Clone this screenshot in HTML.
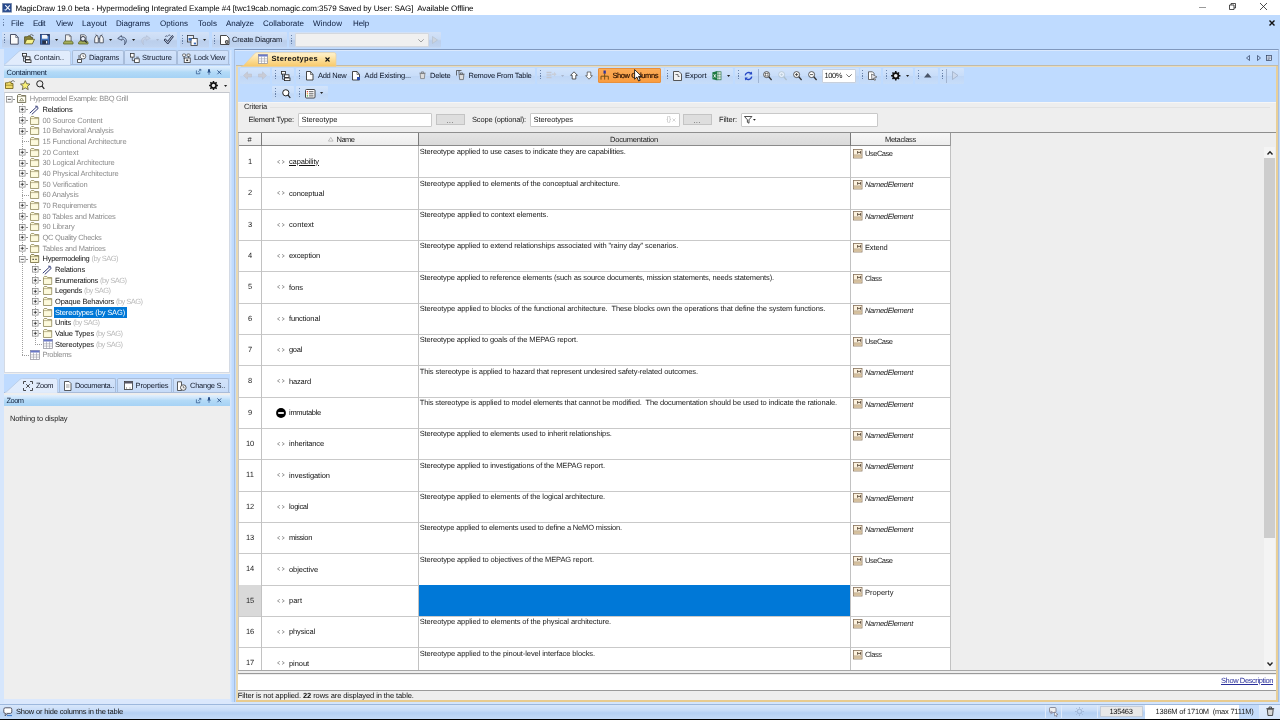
<!DOCTYPE html><html><head><meta charset="utf-8"><title>MagicDraw 19.0 beta - Hypermodeling Integrated Example #4</title><style>
*{box-sizing:border-box;margin:0;padding:0}
html,body{width:1280px;height:720px;overflow:hidden;background:#bfdbff}
body{position:relative;text-rendering:geometricPrecision;font-family:"Liberation Sans",sans-serif;font-size:7.5px;color:#111;line-height:1}
.a{position:absolute;white-space:nowrap}
.t{position:absolute;white-space:nowrap;line-height:10px;height:10px}
.g{color:#8c8c8c}
.lg{color:#b9b9b9}
svg{position:absolute;overflow:visible}
#w{position:absolute;left:0;top:0;width:1280px;height:720px;overflow:hidden;will-change:transform}
.grip{position:absolute;width:1.3px;height:10.7px;background:repeating-linear-gradient(#6a83aa 0,#6a83aa 1.3px,transparent 1.3px,transparent 2.667px)}
.tb{position:absolute;background:linear-gradient(#d3e4fb,#c8ddf9 48%,#c0d7f6 52%,#c7ddf9);border-radius:1px}
.tb0{position:absolute;background:linear-gradient(#d3e2f8,#c9dbf4 45%,#bbcfec 55%,#bfd3f0 90%,#c8dbf6);border-radius:1px}
.fld{position:absolute;background:#fff;border:1px solid #c9c9c9;border-radius:1px}
.btn{position:absolute;background:#dedede;border:1px solid #c4c4c4;text-align:center}
</style></head><body><div id="w">
<div class="a" style="left:0px;top:0px;width:1280px;height:15px;background:#fff"></div>
<svg style="left:2px;top:3px" width="10" height="9.5" viewBox="0 0 10 9.5"><rect x=".3" y=".3" width="9.4" height="8.9" fill="#27498c" stroke="#8695b0" stroke-width=".6"/><path d="M3.2 2.2L8 7.2M7.8 2.4L3.4 7.4" stroke="#f4f7fc" stroke-width="1.1"/><path d="M1.8 6.8H4.2" stroke="#9cc0ee" stroke-width=".8"/></svg>
<div id="t1" class="t " style="left:15.5px;top:3.8000000000000007px;letter-spacing:-0.074px;font-size:8px;color:#000">MagicDraw 19.0 beta - Hypermodeling Integrated Example #4 [twc19cab.nomagic.com:3579 Saved by User: SAG]&nbsp; Available Offline</div>
<svg style="left:1199px;top:6.5px" width="7" height="1" viewBox="0 0 7 1"><rect width="7" height="1" fill="#9a9a9a"/></svg>
<svg style="left:1229px;top:3px" width="7" height="7" viewBox="0 0 7 7"><path d="M0.5 2H5V6.5H0.5Z M2 2V0.5H6.5V5H5" fill="none" stroke="#222" stroke-width=".8"/></svg>
<svg style="left:1260px;top:3px" width="7" height="7" viewBox="0 0 7 7"><path d="M0 0L7 7M7 0L0 7" stroke="#222" stroke-width=".8"/></svg>
<div class="grip" style="left:3px;top:18.7px;height:8px"></div>
<div id="t2" class="t " style="left:11px;top:18.6px;letter-spacing:0.027px;font-size:8px;color:#0a1a3a">File</div>
<div id="t3" class="t " style="left:33px;top:18.6px;letter-spacing:-0.449px;font-size:8px;color:#0a1a3a">Edit</div>
<div id="t4" class="t " style="left:56px;top:18.6px;letter-spacing:-0.051px;font-size:8px;color:#0a1a3a">View</div>
<div id="t5" class="t " style="left:82px;top:18.6px;letter-spacing:0.161px;font-size:8px;color:#0a1a3a">Layout</div>
<div id="t6" class="t " style="left:116px;top:18.6px;letter-spacing:-0.029px;font-size:8px;color:#0a1a3a">Diagrams</div>
<div id="t7" class="t " style="left:160px;top:18.6px;letter-spacing:0.060px;font-size:8px;color:#0a1a3a">Options</div>
<div id="t8" class="t " style="left:198px;top:18.6px;letter-spacing:0.062px;font-size:8px;color:#0a1a3a">Tools</div>
<div id="t9" class="t " style="left:226px;top:18.6px;letter-spacing:-0.067px;font-size:8px;color:#0a1a3a">Analyze</div>
<div id="t10" class="t " style="left:263px;top:18.6px;letter-spacing:0.007px;font-size:8px;color:#0a1a3a">Collaborate</div>
<div id="t11" class="t " style="left:313px;top:18.6px;letter-spacing:0.091px;font-size:8px;color:#0a1a3a">Window</div>
<div id="t12" class="t " style="left:353px;top:18.6px;letter-spacing:-0.113px;font-size:8px;color:#0a1a3a">Help</div>
<svg style="left:1268.8px;top:19.7px" width="6" height="6" viewBox="0 0 6 6"><path d="M0.5 0.5L5.5 5.5M5.5 0.5L0.5 5.5" stroke="#111" stroke-width="1.4"/></svg>
<div class="tb0" style="left:2px;top:32px;width:175px;height:16px"></div>
<div class="tb0" style="left:180px;top:32px;width:29px;height:16px"></div>
<div class="tb0" style="left:212px;top:32px;width:75px;height:16px"></div>
<div class="tb0" style="left:289px;top:32px;width:152px;height:16px"></div>
<div class="grip" style="left:3.5px;top:34.3px;width:1.5px"></div>
<svg style="left:10px;top:34px" width="8.7" height="10.7" viewBox="0 0 8.7 10.7"><path d="M0.5 0.5H5.699999999999999L8.2 3.5V10.2H0.5Z" fill="#fafafa" stroke="#3a4258" stroke-width=".9"/><path d="M5.699999999999999 0.5V3.5H8.2" fill="none" stroke="#3a4258" stroke-width=".6"/></svg>
<svg style="left:24px;top:34.3px" width="11" height="10.5" viewBox="0 0 11 10.5"><path d="M.6 9.9V2.8H3.2L4.1 1.9H6.8V3.5H8.6V5.4" fill="#8a8438" stroke="#4f4d1e" stroke-width=".8"/><path d="M.6 9.9L2.7 5.3H10.5L8.4 9.9Z" fill="#f7f28c" stroke="#55521f" stroke-width=".8"/><path d="M5.6 1.6C6.6 0 8.2 0 9 1.3" fill="none" stroke="#444" stroke-width=".6"/><path d="M8.1 1.1L9.3 1L9.2 2.2Z" fill="#222"/></svg>
<svg style="left:40px;top:34px" width="10" height="10.7" viewBox="0 0 10 10.7"><rect x=".5" y=".5" width="9" height="9.7" fill="#4172bb" stroke="#2a3f73" stroke-width=".9"/><rect x="2" y=".9" width="5.6" height="3.8" fill="#f1f4fa"/><path d="M6.2 .6L8.6 .6L8.6 2.4Z" fill="#1d2740"/><rect x="2.2" y="6.4" width="5.6" height="3.7" fill="#27324a"/><rect x="6" y="7" width="1.2" height="2.5" fill="#e6ebf4"/></svg>
<svg style="left:55px;top:38.6px" width="3.2" height="2" viewBox="0 0 3.2 2"><path d="M0 0H3.2L1.6 2Z" fill="#222"/></svg>
<svg style="left:63px;top:34px" width="10.5" height="10.7" viewBox="0 0 10.5 10.7"><path d="M2.5 7V.8H6.6L8.1 2.3V7" fill="#f0f0ee" stroke="#4a4f5c" stroke-width=".8"/><path d="M6.4 .9V2.5H8" fill="none" stroke="#4a4f5c" stroke-width=".5"/><path d="M.6 10C.2 8.2 1.4 7 2.5 7H8.1C9.4 7 10.4 8.2 10 10Z" fill="#a5ae5c" stroke="#5c6426" stroke-width=".8"/></svg>
<svg style="left:78px;top:34px" width="10.5" height="10.7" viewBox="0 0 10.5 10.7"><path d="M2.5 7V.8H6.6L8.1 2.3V7" fill="#f0f0ee" stroke="#4a4f5c" stroke-width=".8"/><path d="M.6 10C.2 8.2 1.4 7 2.5 7H8.1C9.4 7 10.4 8.2 10 10Z" fill="#a5ae5c" stroke="#5c6426" stroke-width=".8"/><circle cx="5" cy="4.8" r="2.3" fill="#eef3ff" stroke="#1f2433" stroke-width=".9"/><path d="M6.7 6.6L8.8 8.6" stroke="#1f2433" stroke-width="1.2"/></svg>
<svg style="left:94px;top:34.3px" width="10" height="9.5" viewBox="0 0 10 9.5"><path d="M.7 8.8V4.4L2 1.6H3.6L4.3 4.4V8.8Z M5.7 8.8V4.4L6.4 1.6H8L9.3 4.4V8.8Z" fill="#f6f6f6" stroke="#3a3f4c" stroke-width=".8"/><path d="M4.3 4.6H5.7" stroke="#3a3f4c" stroke-width="1"/><path d="M1.6 .4L2.8 1.5M8.4 .4L7.2 1.5" stroke="#3a3f4c" stroke-width=".7"/></svg>
<svg style="left:109px;top:38.6px" width="3.2" height="2" viewBox="0 0 3.2 2"><path d="M0 0H3.2L1.6 2Z" fill="#222"/></svg>
<svg style="left:117px;top:34.6px" width="11" height="10.5" viewBox="0 0 11 10.5"><path d="M4.4.6L.7 3.5L4.9 5.3V4C7.3 4 8.6 5.8 7.4 9.8C10.8 6.2 9.6 2 4.6 2Z" fill="#bcd2f0" stroke="#36425e" stroke-width=".8" stroke-linejoin="round"/></svg>
<svg style="left:132.2px;top:38.6px" width="3.2" height="2" viewBox="0 0 3.2 2"><path d="M0 0H3.2L1.6 2Z" fill="#222"/></svg>
<svg style="left:140px;top:34.6px" width="11" height="10.5" viewBox="0 0 11 10.5"><path d="M6.6.6L10.3 3.5L6.1 5.3V4C3.7 4 2.4 5.8 3.6 9.8C.2 6.2 1.4 2 6.4 2Z" fill="#c6d2e6" stroke="#b2bfd6" stroke-width=".7" stroke-linejoin="round"/></svg>
<svg style="left:155.5px;top:38.6px" width="3.2" height="2" viewBox="0 0 3.2 2"><path d="M0 0H3.2L1.6 2Z" fill="#a9b6cc"/></svg>
<svg style="left:163px;top:34.3px" width="11" height="11" viewBox="0 0 11 11"><path d="M1 6L2.3 4.8L4.6 7.4L9.2 1.5L10.4 2.6L4.8 10Z" fill="#aebcd6" stroke="#1f2840" stroke-width=".9"/><path d="M2.2 2.8C3 1.5 4 1.5 4.5 2.8M5 1.8C5.8.6 6.8.6 7.3 1.8" fill="none" stroke="#2b3550" stroke-width=".7"/></svg>
<div class="grip" style="left:182px;top:34.5px"></div>
<svg style="left:187px;top:34.5px" width="11" height="11" viewBox="0 0 11 11"><rect x=".5" y=".5" width="6" height="6.5" fill="#e8eef8" stroke="#333" stroke-width=".8"/><rect x="4" y="3.5" width="6.2" height="7" fill="#fff" stroke="#333" stroke-width=".8"/><rect x="1.6" y="3" width="3" height="2.6" fill="#3d6db8"/><rect x="6.8" y="7.6" width="2.2" height="1.8" fill="#3d6db8"/></svg>
<svg style="left:203px;top:38.6px" width="3.2" height="2" viewBox="0 0 3.2 2"><path d="M0 0H3.2L1.6 2Z" fill="#222"/></svg>
<div class="grip" style="left:214px;top:34.5px"></div>
<svg style="left:220px;top:35px" width="10" height="10" viewBox="0 0 10 10"><path d="M.5.5H6.5L9 3V9.5H.5Z" fill="#fff" stroke="#333" stroke-width=".9"/><circle cx="6.8" cy="7" r="1.9" fill="#444"/><circle cx="6.8" cy="7" r=".7" fill="#fff"/></svg>
<div id="t13" class="t " style="left:232px;top:35px;letter-spacing:-0.210px;color:#101624">Create Diagram</div>
<div class="grip" style="left:291px;top:34.5px"></div>
<div class="fld" style="left:295px;top:33px;width:133.5px;height:13.5px;background:#f0f0f0;border-color:#d4d8de"></div>
<svg style="left:417.5px;top:38.5px" width="6" height="3.5" viewBox="0 0 6 3.5"><path d="M.3.3L3 3L5.7.3" fill="none" stroke="#8a8a8a" stroke-width=".8"/></svg>
<svg style="left:432px;top:35.5px" width="6" height="8" viewBox="0 0 6 8"><path d="M.5.5L5.5 4L.5 7.5Z" fill="#ccd4df" stroke="#b4bdca" stroke-width=".6"/></svg>
<div class="a" style="left:0px;top:63.8px;width:231px;height:0.9px;background:#a9bcd9"></div>
<svg style="left:0px;top:49.8px" width="71" height="15.4"><path d="M3.5 14.6L5.5 13.8L19 1.4Q20 .5 21.5 .5H68.5Q70.5 .5 70.5 2.5V15.4H3.5Z" fill="#e1ecfc" stroke="#b3c5e0" stroke-width=".7"/><path d="M0 14.5H4" stroke="#a9bcd9" stroke-width=".9"/></svg>
<div id="t14" class="t " style="left:34px;top:52.8px;letter-spacing:-0.003px;color:#151c2c">Contain..</div>
<svg style="left:22px;top:53.0px" width="10" height="10" viewBox="0 0 10 10"><rect x=".5" y=".5" width="4" height="2.6" fill="#fff" stroke="#222" stroke-width=".8"/><rect x="3.5" y="3.8" width="4.5" height="2.6" fill="#fff" stroke="#222" stroke-width=".8"/><rect x="3.5" y="7" width="5.5" height="2.6" fill="#fff" stroke="#222" stroke-width=".8"/><path d="M1.5 3V8.3H3.5M1.5 5.1H3.5" fill="none" stroke="#222" stroke-width=".7"/></svg>
<div class="a" style="left:72px;top:50.3px;width:51.599999999999994px;height:13.6px;background:linear-gradient(#d3e3fa,#c6dbf8);border:.8px solid #a9bdda;border-bottom:none;border-radius:2px 2px 0 0"></div>
<div id="t15" class="t " style="left:89px;top:52.8px;letter-spacing:-0.262px;color:#151c2c">Diagrams</div>
<svg style="left:77px;top:53.0px" width="10" height="10" viewBox="0 0 10 10"><circle cx="6" cy="3.2" r="2.8" fill="#fff" stroke="#333" stroke-width=".7"/><path d="M6 1.5V3.5H7.3" fill="none" stroke="#333" stroke-width=".6"/><rect x=".6" y="6.5" width="3.8" height="3" fill="#fff" stroke="#333" stroke-width=".8"/><path d="M2 6.5V2" stroke="#333" stroke-width=".7"/></svg>
<div class="a" style="left:124.2px;top:50.3px;width:52.39999999999999px;height:13.6px;background:linear-gradient(#d3e3fa,#c6dbf8);border:.8px solid #a9bdda;border-bottom:none;border-radius:2px 2px 0 0"></div>
<div id="t16" class="t " style="left:142px;top:52.8px;letter-spacing:-0.049px;color:#151c2c">Structure</div>
<svg style="left:130px;top:53.0px" width="10" height="10" viewBox="0 0 10 10"><rect x=".5" y=".5" width="3.6" height="3.6" fill="#fff" stroke="#333" stroke-width=".8"/><rect x="4.6" y="5.8" width="4.6" height="3.6" fill="#fff" stroke="#333" stroke-width=".8"/><path d="M2.3 4.1V7.6H4.6M6.2 4.2H8.8" fill="none" stroke="#333" stroke-width=".7"/></svg>
<div class="a" style="left:177.2px;top:50.3px;width:51.80000000000001px;height:13.6px;background:linear-gradient(#d3e3fa,#c6dbf8);border:.8px solid #a9bdda;border-bottom:none;border-radius:2px 2px 0 0"></div>
<div id="t17" class="t " style="left:194px;top:52.8px;letter-spacing:-0.339px;color:#151c2c">Lock View</div>
<svg style="left:182px;top:53.0px" width="10" height="10" viewBox="0 0 10 10"><rect x=".6" y="1" width="3" height="2.4" rx=".8" fill="#fff" stroke="#333" stroke-width=".7"/><rect x="5" y="1" width="3" height="2.4" rx=".8" fill="#fff" stroke="#333" stroke-width=".7"/><rect x="2.2" y="5" width="6" height="4.5" fill="#fff" stroke="#333" stroke-width=".8"/><path d="M2 3.4V6M6.5 3.4V5" stroke="#333" stroke-width=".6"/><rect x="4.2" y="6.5" width="2" height="1.6" fill="#333"/></svg>
<div class="a" style="left:3.5px;top:65.5px;width:226.5px;height:308px;background:#eeeeee"></div>
<div class="a" style="left:3.5px;top:66px;width:226.5px;height:11.5px;background:linear-gradient(#e2f0fd,#cfe6fb 25%,#b3daf7 50%,#a5d2f5)"></div>
<div id="t18" class="t " style="left:6.5px;top:67.5px;letter-spacing:-0.230px;color:#10203c">Containment</div>
<svg style="left:196.3px;top:69.3px" width="5.2" height="5.2" viewBox="0 0 5.2 5.2"><path d="M.4 1.4V4.8H3.8V3.4M2.2 3L4.8.4M3 .4H4.8V2.2" fill="none" stroke="#2a4f86" stroke-width=".7"/></svg>
<svg style="left:206.8px;top:68.6px" width="4" height="6" viewBox="0 0 4 6"><path d="M1 .3H3V3H1Z" fill="#2a4f86"/><path d="M.2 3.2H3.8M2 3.2V5.8" stroke="#2a4f86" stroke-width=".7"/></svg>
<svg style="left:217.3px;top:69.5px" width="4.6" height="4.6" viewBox="0 0 4.6 4.6"><path d="M.4.4L4.2 4.2M4.2 .4L.4 4.2" stroke="#2a4f86" stroke-width=".9"/></svg>
<svg style="left:5px;top:80px" width="10" height="9" viewBox="0 0 10 9"><path d="M.5 8.5V2.8H3L3.8 2H6V3.5H8V8.5Z" fill="#f1dc6a" stroke="#6b5a10" stroke-width=".8"/><path d="M.5 5.2H8" stroke="#6b5a10" stroke-width=".6"/><path d="M6 2C7 .4 8.5.4 9.6 1.6" fill="none" stroke="#333" stroke-width=".7"/></svg>
<svg style="left:20px;top:79.5px" width="10.5" height="10" viewBox="0 0 10.5 10"><path d="M5.25.6L6.7 3.7L10 4.1L7.5 6.3L8.2 9.6L5.25 7.9L2.3 9.6L3 6.3L.5 4.1L3.8 3.7Z" fill="#f9f078" stroke="#55523a" stroke-width=".8" stroke-linejoin="round"/></svg>
<svg style="left:35.5px;top:80px" width="9" height="9.5" viewBox="0 0 9 9.5"><circle cx="3.8" cy="3.8" r="3.1" fill="none" stroke="#222" stroke-width="1"/><path d="M6 6.2L8.3 8.8" stroke="#222" stroke-width="1.2"/></svg>
<svg style="left:208.5px;top:80.5px" width="9" height="9" viewBox="0 0 9 9"><path d="M8.94 3.78 L8.94 5.22 L7.81 5.28 L7.39 6.28 L8.15 7.13 L7.13 8.15 L6.28 7.39 L5.28 7.81 L5.22 8.94 L3.78 8.94 L3.72 7.81 L2.72 7.39 L1.87 8.15 L0.85 7.13 L1.61 6.28 L1.19 5.28 L0.06 5.22 L0.06 3.78 L1.19 3.72 L1.61 2.72 L0.85 1.87 L1.87 0.85 L2.72 1.61 L3.72 1.19 L3.78 0.06 L5.22 0.06 L5.28 1.19 L6.28 1.61 L7.13 0.85 L8.15 1.87 L7.39 2.72 L7.81 3.72Z" fill="#111"/><circle cx="4.5" cy="4.5" r="1.7" fill="#eee"/></svg>
<svg style="left:224.2px;top:84.6px" width="3.2" height="2" viewBox="0 0 3.2 2"><path d="M0 0H3.2L1.6 2Z" fill="#222"/></svg>
<div class="a" style="left:3.5px;top:92.3px;width:226.3px;height:281px;background:#fff;border:1px solid #d4dae4;border-top-color:#c3c6cc"></div>
<div class="a" style="left:22px;top:104.0px;width:1px;height:251.00799999999998px;background:repeating-linear-gradient(#a0a0a0 0,#a0a0a0 1px,transparent 1px,transparent 2px)"></div>
<div class="a" style="left:35px;top:264.005px;width:1px;height:80.33600000000001px;background:repeating-linear-gradient(#a0a0a0 0,#a0a0a0 1px,transparent 1px,transparent 2px)"></div>
<div class="a" style="left:13.3px;top:98.6px;width:2.2px;height:0.8px;background:#8c8c8c"></div>
<svg style="left:5.7px;top:95.7px" width="6.6" height="6.6" viewBox="0 0 6.6 6.6"><rect x=".5" y=".5" width="5.6" height="5.6" fill="#fff" stroke="#7d7d7d" stroke-width=".7"/><path d="M1.7 3.3H4.9" stroke="#222" stroke-width=".8"/></svg>
<svg style="left:17px;top:94.3px" width="9.2" height="9" viewBox="0 0 9.2 9"><path d="M.5 8.5V1.5L1.3.5H3.8L4.6 1.5H8.7V8.5Z" fill="#fffef2" stroke="#5e5a3c" stroke-width=".8"/><path d="M.5 2.4H8.7" stroke="#5e5a3c" stroke-width=".5"/><path d="M2.6 6.8L4.6 4L6.6 6.8Z" fill="none" stroke="#6a6a4a" stroke-width=".7"/></svg>
<div id="t19" class="t g" style="left:29.8px;top:93.6px;letter-spacing:-0.315px;">Hypermodel Example: BBQ Grill</div>
<div class="a" style="left:26.3px;top:109.267px;width:2.2px;height:0.8px;background:#8c8c8c"></div>
<svg style="left:18.7px;top:106.367px" width="6.6" height="6.6" viewBox="0 0 6.6 6.6"><rect x=".5" y=".5" width="5.6" height="5.6" fill="#fff" stroke="#7d7d7d" stroke-width=".7"/><path d="M1.7 3.3H4.9" stroke="#222" stroke-width=".8"/><path d="M3.3 1.7V4.9" stroke="#222" stroke-width=".8"/></svg>
<svg style="left:29px;top:104.667px" width="10" height="10" viewBox="0 0 10 10"><path d="M.8 8.2L8 1.5M2.8 9.4L9.6 3" stroke="#1d2668" stroke-width=".9"/><path d="M6 1.2H8.4V3.4" fill="none" stroke="#1d2668" stroke-width=".7"/></svg>
<div id="t20" class="t " style="left:42.5px;top:104.6px;letter-spacing:-0.142px;">Relations</div>
<div class="a" style="left:26.3px;top:119.934px;width:2.2px;height:0.8px;background:#8c8c8c"></div>
<svg style="left:18.7px;top:117.034px" width="6.6" height="6.6" viewBox="0 0 6.6 6.6"><rect x=".5" y=".5" width="5.6" height="5.6" fill="#fff" stroke="#7d7d7d" stroke-width=".7"/><path d="M1.7 3.3H4.9" stroke="#222" stroke-width=".8"/><path d="M3.3 1.7V4.9" stroke="#222" stroke-width=".8"/></svg>
<svg style="left:30px;top:115.634px" width="9.2" height="9" viewBox="0 0 9.2 9"><path d="M.5 8.5V1.5L1.3.5H3.8L4.6 1.5H8.7V8.5Z" fill="#fdfadc" stroke="#8f8858" stroke-width=".8"/><path d="M.5 2.6H8.7" stroke="#7d7440" stroke-width=".5"/></svg>
<div id="t21" class="t g" style="left:42.5px;top:115.6px;letter-spacing:-0.150px;">00 Source Content</div>
<div class="a" style="left:26.3px;top:130.601px;width:2.2px;height:0.8px;background:#8c8c8c"></div>
<svg style="left:18.7px;top:127.70100000000001px" width="6.6" height="6.6" viewBox="0 0 6.6 6.6"><rect x=".5" y=".5" width="5.6" height="5.6" fill="#fff" stroke="#7d7d7d" stroke-width=".7"/><path d="M1.7 3.3H4.9" stroke="#222" stroke-width=".8"/><path d="M3.3 1.7V4.9" stroke="#222" stroke-width=".8"/></svg>
<svg style="left:30px;top:126.301px" width="9.2" height="9" viewBox="0 0 9.2 9"><path d="M.5 8.5V1.5L1.3.5H3.8L4.6 1.5H8.7V8.5Z" fill="#fdfadc" stroke="#8f8858" stroke-width=".8"/><path d="M.5 2.6H8.7" stroke="#7d7440" stroke-width=".5"/></svg>
<div id="t22" class="t g" style="left:42.5px;top:125.6px;letter-spacing:-0.203px;">10 Behavioral Analysis</div>
<div class="a" style="left:22px;top:141px;width:6.5px;height:1px;background:repeating-linear-gradient(90deg,#999 0,#999 1px,transparent 1px,transparent 2px)"></div>
<svg style="left:30px;top:136.96800000000002px" width="9.2" height="9" viewBox="0 0 9.2 9"><path d="M.5 8.5V1.5L1.3.5H3.8L4.6 1.5H8.7V8.5Z" fill="#fdfadc" stroke="#8f8858" stroke-width=".8"/><path d="M.5 2.6H8.7" stroke="#7d7440" stroke-width=".5"/></svg>
<div id="t23" class="t g" style="left:42.5px;top:136.6px;letter-spacing:-0.105px;">15 Functional Architecture</div>
<div class="a" style="left:26.3px;top:151.935px;width:2.2px;height:0.8px;background:#8c8c8c"></div>
<svg style="left:18.7px;top:149.035px" width="6.6" height="6.6" viewBox="0 0 6.6 6.6"><rect x=".5" y=".5" width="5.6" height="5.6" fill="#fff" stroke="#7d7d7d" stroke-width=".7"/><path d="M1.7 3.3H4.9" stroke="#222" stroke-width=".8"/><path d="M3.3 1.7V4.9" stroke="#222" stroke-width=".8"/></svg>
<svg style="left:30px;top:147.63500000000002px" width="9.2" height="9" viewBox="0 0 9.2 9"><path d="M.5 8.5V1.5L1.3.5H3.8L4.6 1.5H8.7V8.5Z" fill="#fdfadc" stroke="#8f8858" stroke-width=".8"/><path d="M.5 2.6H8.7" stroke="#7d7440" stroke-width=".5"/></svg>
<div id="t24" class="t g" style="left:42.5px;top:147.6px;letter-spacing:-0.028px;">20 Context</div>
<div class="a" style="left:26.3px;top:162.602px;width:2.2px;height:0.8px;background:#8c8c8c"></div>
<svg style="left:18.7px;top:159.702px" width="6.6" height="6.6" viewBox="0 0 6.6 6.6"><rect x=".5" y=".5" width="5.6" height="5.6" fill="#fff" stroke="#7d7d7d" stroke-width=".7"/><path d="M1.7 3.3H4.9" stroke="#222" stroke-width=".8"/><path d="M3.3 1.7V4.9" stroke="#222" stroke-width=".8"/></svg>
<svg style="left:30px;top:158.30200000000002px" width="9.2" height="9" viewBox="0 0 9.2 9"><path d="M.5 8.5V1.5L1.3.5H3.8L4.6 1.5H8.7V8.5Z" fill="#fdfadc" stroke="#8f8858" stroke-width=".8"/><path d="M.5 2.6H8.7" stroke="#7d7440" stroke-width=".5"/></svg>
<div id="t25" class="t g" style="left:42.5px;top:157.6px;letter-spacing:-0.169px;">30 Logical Architecture</div>
<div class="a" style="left:26.3px;top:173.26899999999998px;width:2.2px;height:0.8px;background:#8c8c8c"></div>
<svg style="left:18.7px;top:170.36899999999997px" width="6.6" height="6.6" viewBox="0 0 6.6 6.6"><rect x=".5" y=".5" width="5.6" height="5.6" fill="#fff" stroke="#7d7d7d" stroke-width=".7"/><path d="M1.7 3.3H4.9" stroke="#222" stroke-width=".8"/><path d="M3.3 1.7V4.9" stroke="#222" stroke-width=".8"/></svg>
<svg style="left:30px;top:168.969px" width="9.2" height="9" viewBox="0 0 9.2 9"><path d="M.5 8.5V1.5L1.3.5H3.8L4.6 1.5H8.7V8.5Z" fill="#fdfadc" stroke="#8f8858" stroke-width=".8"/><path d="M.5 2.6H8.7" stroke="#7d7440" stroke-width=".5"/></svg>
<div id="t26" class="t g" style="left:42.5px;top:168.6px;letter-spacing:-0.169px;">40 Physical Architecture</div>
<div class="a" style="left:26.3px;top:183.936px;width:2.2px;height:0.8px;background:#8c8c8c"></div>
<svg style="left:18.7px;top:181.036px" width="6.6" height="6.6" viewBox="0 0 6.6 6.6"><rect x=".5" y=".5" width="5.6" height="5.6" fill="#fff" stroke="#7d7d7d" stroke-width=".7"/><path d="M1.7 3.3H4.9" stroke="#222" stroke-width=".8"/><path d="M3.3 1.7V4.9" stroke="#222" stroke-width=".8"/></svg>
<svg style="left:30px;top:179.63600000000002px" width="9.2" height="9" viewBox="0 0 9.2 9"><path d="M.5 8.5V1.5L1.3.5H3.8L4.6 1.5H8.7V8.5Z" fill="#fdfadc" stroke="#8f8858" stroke-width=".8"/><path d="M.5 2.6H8.7" stroke="#7d7440" stroke-width=".5"/></svg>
<div id="t27" class="t g" style="left:42.5px;top:179.6px;letter-spacing:-0.142px;">50 Verification</div>
<div class="a" style="left:22px;top:195px;width:6.5px;height:1px;background:repeating-linear-gradient(90deg,#999 0,#999 1px,transparent 1px,transparent 2px)"></div>
<svg style="left:30px;top:190.303px" width="9.2" height="9" viewBox="0 0 9.2 9"><path d="M.5 8.5V1.5L1.3.5H3.8L4.6 1.5H8.7V8.5Z" fill="#fdfadc" stroke="#8f8858" stroke-width=".8"/><path d="M.5 2.6H8.7" stroke="#7d7440" stroke-width=".5"/></svg>
<div id="t28" class="t g" style="left:42.5px;top:189.6px;letter-spacing:-0.178px;">60 Analysis</div>
<div class="a" style="left:26.3px;top:205.27px;width:2.2px;height:0.8px;background:#8c8c8c"></div>
<svg style="left:18.7px;top:202.37px" width="6.6" height="6.6" viewBox="0 0 6.6 6.6"><rect x=".5" y=".5" width="5.6" height="5.6" fill="#fff" stroke="#7d7d7d" stroke-width=".7"/><path d="M1.7 3.3H4.9" stroke="#222" stroke-width=".8"/><path d="M3.3 1.7V4.9" stroke="#222" stroke-width=".8"/></svg>
<svg style="left:30px;top:200.97000000000003px" width="9.2" height="9" viewBox="0 0 9.2 9"><path d="M.5 8.5V1.5L1.3.5H3.8L4.6 1.5H8.7V8.5Z" fill="#fdfadc" stroke="#8f8858" stroke-width=".8"/><path d="M.5 2.6H8.7" stroke="#7d7440" stroke-width=".5"/></svg>
<div id="t29" class="t g" style="left:42.5px;top:200.6px;letter-spacing:-0.208px;">70 Requirements</div>
<div class="a" style="left:26.3px;top:215.93699999999998px;width:2.2px;height:0.8px;background:#8c8c8c"></div>
<svg style="left:18.7px;top:213.03699999999998px" width="6.6" height="6.6" viewBox="0 0 6.6 6.6"><rect x=".5" y=".5" width="5.6" height="5.6" fill="#fff" stroke="#7d7d7d" stroke-width=".7"/><path d="M1.7 3.3H4.9" stroke="#222" stroke-width=".8"/><path d="M3.3 1.7V4.9" stroke="#222" stroke-width=".8"/></svg>
<svg style="left:30px;top:211.637px" width="9.2" height="9" viewBox="0 0 9.2 9"><path d="M.5 8.5V1.5L1.3.5H3.8L4.6 1.5H8.7V8.5Z" fill="#fdfadc" stroke="#8f8858" stroke-width=".8"/><path d="M.5 2.6H8.7" stroke="#7d7440" stroke-width=".5"/></svg>
<div id="t30" class="t g" style="left:42.5px;top:211.6px;letter-spacing:-0.182px;">80 Tables and Matrices</div>
<div class="a" style="left:26.3px;top:226.60399999999998px;width:2.2px;height:0.8px;background:#8c8c8c"></div>
<svg style="left:18.7px;top:223.70399999999998px" width="6.6" height="6.6" viewBox="0 0 6.6 6.6"><rect x=".5" y=".5" width="5.6" height="5.6" fill="#fff" stroke="#7d7d7d" stroke-width=".7"/><path d="M1.7 3.3H4.9" stroke="#222" stroke-width=".8"/><path d="M3.3 1.7V4.9" stroke="#222" stroke-width=".8"/></svg>
<svg style="left:30px;top:222.304px" width="9.2" height="9" viewBox="0 0 9.2 9"><path d="M.5 8.5V1.5L1.3.5H3.8L4.6 1.5H8.7V8.5Z" fill="#fdfadc" stroke="#8f8858" stroke-width=".8"/><path d="M.5 2.6H8.7" stroke="#7d7440" stroke-width=".5"/></svg>
<div id="t31" class="t g" style="left:42.5px;top:221.6px;letter-spacing:-0.136px;">90 Library</div>
<div class="a" style="left:26.3px;top:237.271px;width:2.2px;height:0.8px;background:#8c8c8c"></div>
<svg style="left:18.7px;top:234.37099999999998px" width="6.6" height="6.6" viewBox="0 0 6.6 6.6"><rect x=".5" y=".5" width="5.6" height="5.6" fill="#fff" stroke="#7d7d7d" stroke-width=".7"/><path d="M1.7 3.3H4.9" stroke="#222" stroke-width=".8"/><path d="M3.3 1.7V4.9" stroke="#222" stroke-width=".8"/></svg>
<svg style="left:30px;top:232.971px" width="9.2" height="9" viewBox="0 0 9.2 9"><path d="M.5 8.5V1.5L1.3.5H3.8L4.6 1.5H8.7V8.5Z" fill="#fdfadc" stroke="#8f8858" stroke-width=".8"/><path d="M.5 2.6H8.7" stroke="#7d7440" stroke-width=".5"/></svg>
<div id="t32" class="t g" style="left:42.5px;top:232.6px;letter-spacing:-0.281px;">QC Quality Checks</div>
<div class="a" style="left:26.3px;top:247.938px;width:2.2px;height:0.8px;background:#8c8c8c"></div>
<svg style="left:18.7px;top:245.03799999999998px" width="6.6" height="6.6" viewBox="0 0 6.6 6.6"><rect x=".5" y=".5" width="5.6" height="5.6" fill="#fff" stroke="#7d7d7d" stroke-width=".7"/><path d="M1.7 3.3H4.9" stroke="#222" stroke-width=".8"/><path d="M3.3 1.7V4.9" stroke="#222" stroke-width=".8"/></svg>
<svg style="left:30px;top:243.638px" width="9.2" height="9" viewBox="0 0 9.2 9"><path d="M.5 8.5V1.5L1.3.5H3.8L4.6 1.5H8.7V8.5Z" fill="#fdfadc" stroke="#8f8858" stroke-width=".8"/><path d="M.5 2.6H8.7" stroke="#7d7440" stroke-width=".5"/></svg>
<div id="t33" class="t g" style="left:42.5px;top:243.6px;letter-spacing:-0.195px;">Tables and Matrices</div>
<div class="a" style="left:26.3px;top:258.605px;width:2.2px;height:0.8px;background:#8c8c8c"></div>
<svg style="left:18.7px;top:255.70499999999998px" width="6.6" height="6.6" viewBox="0 0 6.6 6.6"><rect x=".5" y=".5" width="5.6" height="5.6" fill="#fff" stroke="#7d7d7d" stroke-width=".7"/><path d="M1.7 3.3H4.9" stroke="#222" stroke-width=".8"/></svg>
<svg style="left:30px;top:254.305px" width="9.2" height="9" viewBox="0 0 9.2 9"><path d="M.5 8.5V1.5L1.3.5H3.8L4.6 1.5H8.7V8.5Z" fill="#fbf6cf" stroke="#6d6535" stroke-width=".8"/><path d="M.5 2.6H8.7" stroke="#6d6535" stroke-width=".5"/><path d="M2.4 5.3H4M5.2 5.3H6.8" stroke="#333" stroke-width="1"/></svg>
<div id="t34" class="t " style="left:42.5px;top:253.60000000000002px;letter-spacing:-0.266px;">Hypermodeling</div>
<div id="t35" class="t lg" style="left:90.0px;top:253.60000000000002px;letter-spacing:-0.549px;">&nbsp;(by SAG)</div>
<div class="a" style="left:39.3px;top:269.27200000000005px;width:2.2px;height:0.8px;background:#8c8c8c"></div>
<svg style="left:31.7px;top:266.372px" width="6.6" height="6.6" viewBox="0 0 6.6 6.6"><rect x=".5" y=".5" width="5.6" height="5.6" fill="#fff" stroke="#7d7d7d" stroke-width=".7"/><path d="M1.7 3.3H4.9" stroke="#222" stroke-width=".8"/><path d="M3.3 1.7V4.9" stroke="#222" stroke-width=".8"/></svg>
<svg style="left:42px;top:264.672px" width="10" height="10" viewBox="0 0 10 10"><path d="M.8 8.2L8 1.5M2.8 9.4L9.6 3" stroke="#1d2668" stroke-width=".9"/><path d="M6 1.2H8.4V3.4" fill="none" stroke="#1d2668" stroke-width=".7"/></svg>
<div id="t36" class="t " style="left:55px;top:264.6px;letter-spacing:-0.142px;">Relations</div>
<div class="a" style="left:39.3px;top:279.939px;width:2.2px;height:0.8px;background:#8c8c8c"></div>
<svg style="left:31.7px;top:277.039px" width="6.6" height="6.6" viewBox="0 0 6.6 6.6"><rect x=".5" y=".5" width="5.6" height="5.6" fill="#fff" stroke="#7d7d7d" stroke-width=".7"/><path d="M1.7 3.3H4.9" stroke="#222" stroke-width=".8"/><path d="M3.3 1.7V4.9" stroke="#222" stroke-width=".8"/></svg>
<svg style="left:43px;top:275.639px" width="9.2" height="9" viewBox="0 0 9.2 9"><path d="M.5 8.5V1.5L1.3.5H3.8L4.6 1.5H8.7V8.5Z" fill="#fdfadc" stroke="#8f8858" stroke-width=".8"/><path d="M.5 2.6H8.7" stroke="#7d7440" stroke-width=".5"/></svg>
<div id="t37" class="t " style="left:55px;top:275.6px;letter-spacing:-0.273px;">Enumerations</div>
<div id="t38" class="t lg" style="left:98.5px;top:275.6px;letter-spacing:-0.549px;">&nbsp;(by SAG)</div>
<div class="a" style="left:39.3px;top:290.606px;width:2.2px;height:0.8px;background:#8c8c8c"></div>
<svg style="left:31.7px;top:287.70599999999996px" width="6.6" height="6.6" viewBox="0 0 6.6 6.6"><rect x=".5" y=".5" width="5.6" height="5.6" fill="#fff" stroke="#7d7d7d" stroke-width=".7"/><path d="M1.7 3.3H4.9" stroke="#222" stroke-width=".8"/><path d="M3.3 1.7V4.9" stroke="#222" stroke-width=".8"/></svg>
<svg style="left:43px;top:286.306px" width="9.2" height="9" viewBox="0 0 9.2 9"><path d="M.5 8.5V1.5L1.3.5H3.8L4.6 1.5H8.7V8.5Z" fill="#fdfadc" stroke="#8f8858" stroke-width=".8"/><path d="M.5 2.6H8.7" stroke="#7d7440" stroke-width=".5"/></svg>
<div id="t39" class="t " style="left:55px;top:285.6px;letter-spacing:-0.254px;">Legends</div>
<div id="t40" class="t lg" style="left:82.5px;top:285.6px;letter-spacing:-0.549px;">&nbsp;(by SAG)</div>
<div class="a" style="left:39.3px;top:301.273px;width:2.2px;height:0.8px;background:#8c8c8c"></div>
<svg style="left:31.7px;top:298.373px" width="6.6" height="6.6" viewBox="0 0 6.6 6.6"><rect x=".5" y=".5" width="5.6" height="5.6" fill="#fff" stroke="#7d7d7d" stroke-width=".7"/><path d="M1.7 3.3H4.9" stroke="#222" stroke-width=".8"/><path d="M3.3 1.7V4.9" stroke="#222" stroke-width=".8"/></svg>
<svg style="left:43px;top:296.973px" width="9.2" height="9" viewBox="0 0 9.2 9"><path d="M.5 8.5V1.5L1.3.5H3.8L4.6 1.5H8.7V8.5Z" fill="#fdfadc" stroke="#8f8858" stroke-width=".8"/><path d="M.5 2.6H8.7" stroke="#7d7440" stroke-width=".5"/></svg>
<div id="t41" class="t " style="left:55px;top:296.6px;letter-spacing:-0.195px;">Opaque Behaviors</div>
<div id="t42" class="t lg" style="left:114.5px;top:296.6px;letter-spacing:-0.549px;">&nbsp;(by SAG)</div>
<div class="a" style="left:39.3px;top:311.94000000000005px;width:2.2px;height:0.8px;background:#8c8c8c"></div>
<svg style="left:31.7px;top:309.04px" width="6.6" height="6.6" viewBox="0 0 6.6 6.6"><rect x=".5" y=".5" width="5.6" height="5.6" fill="#fff" stroke="#7d7d7d" stroke-width=".7"/><path d="M1.7 3.3H4.9" stroke="#222" stroke-width=".8"/><path d="M3.3 1.7V4.9" stroke="#222" stroke-width=".8"/></svg>
<svg style="left:43px;top:307.64000000000004px" width="9.2" height="9" viewBox="0 0 9.2 9"><path d="M.5 8.5V1.5L1.3.5H3.8L4.6 1.5H8.7V8.5Z" fill="#fdfadc" stroke="#8f8858" stroke-width=".8"/><path d="M.5 2.6H8.7" stroke="#7d7440" stroke-width=".5"/></svg>
<div class="a" style="left:54px;top:307.04px;width:72.5px;height:10.6px;background:#0078d7"></div>
<div id="t43" class="t " style="left:55px;top:307.6px;letter-spacing:-0.148px;color:#fff">Stereotypes (by SAG)</div>
<div class="a" style="left:39.3px;top:322.607px;width:2.2px;height:0.8px;background:#8c8c8c"></div>
<svg style="left:31.7px;top:319.707px" width="6.6" height="6.6" viewBox="0 0 6.6 6.6"><rect x=".5" y=".5" width="5.6" height="5.6" fill="#fff" stroke="#7d7d7d" stroke-width=".7"/><path d="M1.7 3.3H4.9" stroke="#222" stroke-width=".8"/><path d="M3.3 1.7V4.9" stroke="#222" stroke-width=".8"/></svg>
<svg style="left:43px;top:318.307px" width="9.2" height="9" viewBox="0 0 9.2 9"><path d="M.5 8.5V1.5L1.3.5H3.8L4.6 1.5H8.7V8.5Z" fill="#fdfadc" stroke="#8f8858" stroke-width=".8"/><path d="M.5 2.6H8.7" stroke="#7d7440" stroke-width=".5"/></svg>
<div id="t44" class="t " style="left:55px;top:317.6px;letter-spacing:-0.219px;">Units</div>
<div id="t45" class="t lg" style="left:71.5px;top:317.6px;letter-spacing:-0.549px;">&nbsp;(by SAG)</div>
<div class="a" style="left:39.3px;top:333.274px;width:2.2px;height:0.8px;background:#8c8c8c"></div>
<svg style="left:31.7px;top:330.37399999999997px" width="6.6" height="6.6" viewBox="0 0 6.6 6.6"><rect x=".5" y=".5" width="5.6" height="5.6" fill="#fff" stroke="#7d7d7d" stroke-width=".7"/><path d="M1.7 3.3H4.9" stroke="#222" stroke-width=".8"/><path d="M3.3 1.7V4.9" stroke="#222" stroke-width=".8"/></svg>
<svg style="left:43px;top:328.974px" width="9.2" height="9" viewBox="0 0 9.2 9"><path d="M.5 8.5V1.5L1.3.5H3.8L4.6 1.5H8.7V8.5Z" fill="#fdfadc" stroke="#8f8858" stroke-width=".8"/><path d="M.5 2.6H8.7" stroke="#7d7440" stroke-width=".5"/></svg>
<div id="t46" class="t " style="left:55px;top:328.6px;letter-spacing:-0.145px;">Value Types</div>
<div id="t47" class="t lg" style="left:94.5px;top:328.6px;letter-spacing:-0.549px;">&nbsp;(by SAG)</div>
<div class="a" style="left:35px;top:344px;width:6.5px;height:1px;background:repeating-linear-gradient(90deg,#999 0,#999 1px,transparent 1px,transparent 2px)"></div>
<svg style="left:43px;top:339.341px" width="10" height="10" viewBox="0 0 10 10"><rect x=".5" y=".5" width="9" height="9" fill="#fff" stroke="#8a8a96" stroke-width=".7"/><rect x=".5" y=".5" width="9" height="2" fill="#6a78c8"/><path d="M3.5 2.5V9.5M6.5 2.5V9.5M.5 4.8H9.5M.5 7.1H9.5" stroke="#9a9aa6" stroke-width=".6"/></svg>
<div id="t48" class="t " style="left:55px;top:339.6px;letter-spacing:-0.094px;">Stereotypes</div>
<div id="t49" class="t lg" style="left:94.5px;top:339.6px;letter-spacing:-0.549px;">&nbsp;(by SAG)</div>
<div class="a" style="left:22px;top:355px;width:6.5px;height:1px;background:repeating-linear-gradient(90deg,#999 0,#999 1px,transparent 1px,transparent 2px)"></div>
<svg style="left:30px;top:350.008px" width="10" height="10" viewBox="0 0 10 10"><rect x=".5" y=".5" width="9" height="9" fill="#fff" stroke="#8a8a96" stroke-width=".7"/><rect x=".5" y=".5" width="9" height="2" fill="#6a78c8"/><path d="M3.5 2.5V9.5M6.5 2.5V9.5M.5 4.8H9.5M.5 7.1H9.5" stroke="#9a9aa6" stroke-width=".6"/></svg>
<div id="t50" class="t g" style="left:42.5px;top:349.6px;letter-spacing:-0.336px;">Problems</div>
<div class="a" style="left:0px;top:391.7px;width:231px;height:0.9px;background:#a9bcd9"></div>
<svg style="left:1px;top:377.7px" width="57" height="15.4"><path d="M3.5 14.6L5.5 13.8L19 1.4Q20 .5 21.5 .5H54.5Q56.5 .5 56.5 2.5V15.4H3.5Z" fill="#e1ecfc" stroke="#b3c5e0" stroke-width=".7"/><path d="M0 14.5H4" stroke="#a9bcd9" stroke-width=".9"/></svg>
<div id="t51" class="t " style="left:36px;top:380.7px;letter-spacing:-0.543px;color:#151c2c">Zoom</div>
<svg style="left:23px;top:380.9px" width="10" height="10" viewBox="0 0 10 10"><path d="M.5 3V.5H3M7 .5H9.5V3M9.5 7V9.5H7M3 9.5H.5V7" fill="none" stroke="#222" stroke-width=".8"/><path d="M3.2 3.2L6.8 6.8M6.8 3.2L3.2 6.8" stroke="#222" stroke-width=".8"/></svg>
<div class="a" style="left:58.6px;top:378.2px;width:57.800000000000004px;height:13.6px;background:linear-gradient(#d3e3fa,#c6dbf8);border:.8px solid #a9bdda;border-bottom:none;border-radius:2px 2px 0 0"></div>
<div id="t52" class="t " style="left:75px;top:380.7px;letter-spacing:-0.321px;color:#151c2c">Documenta..</div>
<svg style="left:64px;top:380.9px" width="8" height="10" viewBox="0 0 8 10"><path d="M.5.5H5L7 2.5V9.5H.5Z" fill="#fff" stroke="#333" stroke-width=".8"/><path d="M2 4H5.5M2 6H5.5" stroke="#555" stroke-width=".6"/></svg>
<div class="a" style="left:117px;top:378.2px;width:55.400000000000006px;height:13.6px;background:linear-gradient(#d3e3fa,#c6dbf8);border:.8px solid #a9bdda;border-bottom:none;border-radius:2px 2px 0 0"></div>
<div id="t53" class="t " style="left:135.5px;top:380.7px;letter-spacing:-0.119px;color:#151c2c">Properties</div>
<svg style="left:124px;top:381.4px" width="9" height="9" viewBox="0 0 9 9"><rect x=".5" y=".5" width="8" height="8" fill="#fff" stroke="#333" stroke-width=".8"/><rect x=".5" y=".5" width="8" height="2" fill="#556"/><path d="M2.5 6.5V7.5M6 6.5V7.5" stroke="#333" stroke-width=".7"/></svg>
<div class="a" style="left:173px;top:378.2px;width:56px;height:13.6px;background:linear-gradient(#d3e3fa,#c6dbf8);border:.8px solid #a9bdda;border-bottom:none;border-radius:2px 2px 0 0"></div>
<div id="t54" class="t " style="left:190px;top:380.7px;letter-spacing:-0.253px;color:#151c2c">Change S..</div>
<svg style="left:177px;top:380.9px" width="10" height="10" viewBox="0 0 10 10"><path d="M.5.8H4.5V9.5H.5Z" fill="#fff" stroke="#333" stroke-width=".8"/><circle cx="6.3" cy="6.6" r="2.8" fill="#f4f4f4" stroke="#333" stroke-width=".8"/><path d="M6.3 5V6.8H7.6" stroke="#333" stroke-width=".6" fill="none"/></svg>
<div class="a" style="left:0px;top:699px;width:232px;height:5px;background:#dbe8fc"></div>
<div class="a" style="left:229.5px;top:50px;width:2.5px;height:652px;background:linear-gradient(90deg,#dbe9fc,#c6defd)"></div>
<div class="a" style="left:3.5px;top:393px;width:226.5px;height:306.3px;background:#eeeeee"></div>
<div class="a" style="left:3.5px;top:394.7px;width:226.5px;height:11.5px;background:linear-gradient(#e2f0fd,#cfe6fb 25%,#b3daf7 50%,#a5d2f5)"></div>
<div id="t55" class="t " style="left:6.5px;top:396.2px;letter-spacing:-0.543px;color:#10203c">Zoom</div>
<svg style="left:196.3px;top:398.0px" width="5.2" height="5.2" viewBox="0 0 5.2 5.2"><path d="M.4 1.4V4.8H3.8V3.4M2.2 3L4.8.4M3 .4H4.8V2.2" fill="none" stroke="#2a4f86" stroke-width=".7"/></svg>
<svg style="left:206.8px;top:397.3px" width="4" height="6" viewBox="0 0 4 6"><path d="M1 .3H3V3H1Z" fill="#2a4f86"/><path d="M.2 3.2H3.8M2 3.2V5.8" stroke="#2a4f86" stroke-width=".7"/></svg>
<svg style="left:217.3px;top:398.2px" width="4.6" height="4.6" viewBox="0 0 4.6 4.6"><path d="M.4.4L4.2 4.2M4.2 .4L.4 4.2" stroke="#2a4f86" stroke-width=".9"/></svg>
<div id="t56" class="t " style="left:10px;top:413.5px;letter-spacing:-0.118px;color:#222">Nothing to display</div>
<div class="a" style="left:0px;top:49px;width:3.5px;height:654px;background:#d6e6fc"></div>
<div class="a" style="left:234px;top:49px;width:1045px;height:653.5px;border:1px solid #a9bfdf;border-top-color:#8098bd;border-bottom:none;background:#bfdbff"></div>
<div class="a" style="left:235px;top:50px;width:1043px;height:1px;background:#dbe9fd"></div>
<svg style="left:1245.5px;top:55px" width="4" height="6" viewBox="0 0 4 6"><path d="M3.5.5L.5 3L3.5 5.5Z" fill="none" stroke="#2b3b5b" stroke-width=".7"/></svg>
<svg style="left:1256.5px;top:55px" width="4" height="6" viewBox="0 0 4 6"><path d="M.5.5L3.5 3L.5 5.5Z" fill="none" stroke="#2b3b5b" stroke-width=".7"/></svg>
<svg style="left:1266px;top:55.1px" width="6" height="6" viewBox="0 0 6 6"><rect x=".4" y=".4" width="5.2" height="5.2" fill="#dfe8f6" stroke="#2b3b5b" stroke-width=".7"/><path d="M1.5 2H4.5M1.5 3.3H4.5M1.5 4.6H3.5" stroke="#2b3b5b" stroke-width=".5"/></svg>
<div class="a" style="left:236px;top:65px;width:1041.5px;height:1px;background:#c2bba8"></div>
<div class="a" style="left:236px;top:66px;width:1041.5px;height:1px;background:#e9dcbc"></div>
<div class="a" style="left:236px;top:65.5px;width:2px;height:636.5px;background:#e9d9b2"></div>
<div class="a" style="left:1275.6px;top:65.5px;width:2px;height:636.5px;background:#e8cf98"></div>
<div class="a" style="left:236px;top:700px;width:1041.5px;height:2.4px;background:#e8cb90"></div>
<svg style="left:241px;top:52px" width="98" height="15"><defs><linearGradient id="tg" x1="0" y1="0" x2="0" y2="1"><stop offset="0" stop-color="#fff4d2"/><stop offset=".4" stop-color="#fde3a4"/><stop offset="1" stop-color="#f7c868"/></linearGradient></defs><path d="M0 14.6L2.5 13.6L13.5 1.8Q14.6.6 16.5.6H93Q95 .6 95 2.6V14.6Z" fill="url(#tg)" stroke="#e6cfa0" stroke-width=".7"/></svg>
<svg style="left:257.9px;top:53.8px" width="10" height="9.8" viewBox="0 0 10 9.8"><rect x=".5" y=".5" width="9" height="9" fill="#fff" stroke="#8a8a96" stroke-width=".7"/><rect x=".5" y=".5" width="9" height="2" fill="#6a78c8"/><path d="M3.5 2.5V9.5M6.5 2.5V9.5M.5 4.8H9.5M.5 7.1H9.5" stroke="#9a9aa6" stroke-width=".6"/></svg>
<div id="t57" class="t " style="left:271.5px;top:53.7px;letter-spacing:0.324px;font-weight:bold;color:#111">Stereotypes</div>
<svg style="left:324.5px;top:56.5px" width="5" height="5" viewBox="0 0 5 5"><path d="M.5.5L4.5 4.5M4.5 .5L.5 4.5" stroke="#111" stroke-width="1.1"/></svg>
<div class="tb" style="left:240px;top:68px;width:30px;height:15.5px"></div>
<div class="tb" style="left:272px;top:68px;width:22px;height:15.5px"></div>
<div class="tb" style="left:296px;top:68px;width:239px;height:15.5px"></div>
<div class="tb" style="left:537px;top:68px;width:127px;height:15.5px"></div>
<div class="tb" style="left:665px;top:68px;width:68px;height:15.5px"></div>
<div class="tb" style="left:735px;top:68px;width:124px;height:15.5px"></div>
<div class="tb" style="left:860px;top:68px;width:21px;height:15.5px"></div>
<div class="tb" style="left:883px;top:68px;width:30px;height:15.5px"></div>
<div class="tb" style="left:915px;top:68px;width:23px;height:15.5px"></div>
<div class="tb" style="left:940px;top:68px;width:24px;height:15.5px"></div>
<div class="tb" style="left:272px;top:85.5px;width:22px;height:15.5px"></div>
<div class="tb" style="left:296px;top:85.5px;width:32px;height:15.5px"></div>
<svg style="left:243px;top:71px" width="9" height="9" viewBox="0 0 9 9"><path d="M.5 4.5L4.5.8V3H8.5V6H4.5V8.2Z" fill="#c9ccd6" stroke="#b9bdc9" stroke-width=".5"/></svg>
<svg style="left:258px;top:71px" width="9" height="9" viewBox="0 0 9 9"><path d="M8.5 4.5L4.5.8V3H.5V6H4.5V8.2Z" fill="#c9ccd6" stroke="#b9bdc9" stroke-width=".5"/></svg>
<div class="grip" style="left:275.1px;top:70.2px"></div>
<svg style="left:281px;top:70.5px" width="10" height="10" viewBox="0 0 10 10"><rect x=".5" y=".5" width="4" height="2.6" fill="#fff" stroke="#222" stroke-width=".8"/><rect x="3.5" y="3.8" width="4.5" height="2.6" fill="#fff" stroke="#222" stroke-width=".8"/><rect x="3.5" y="7" width="5.5" height="2.6" fill="#fff" stroke="#222" stroke-width=".8"/><path d="M1.5 3V8.3H3.5M1.5 5.1H3.5" fill="none" stroke="#222" stroke-width=".7"/></svg>
<div class="grip" style="left:299.1px;top:70.2px"></div>
<svg style="left:306px;top:70.5px" width="7.5" height="9.5" viewBox="0 0 7.5 9.5"><path d="M0.5 0.5H4.5L7.0 3.5V9.0H0.5Z" fill="#fff" stroke="#333" stroke-width=".9"/><path d="M4.5 0.5V3.5H7.0" fill="none" stroke="#333" stroke-width=".6"/></svg>
<div id="t58" class="t " style="left:318px;top:70.5px;letter-spacing:-0.277px;color:#0d1424">Add New</div>
<svg style="left:352px;top:70.5px" width="8" height="9.5" viewBox="0 0 8 9.5"><path d="M0.5 0.5H5L7.5 3.5V9.0H0.5Z" fill="#fff" stroke="#333" stroke-width=".9"/><path d="M5 0.5V3.5H7.5" fill="none" stroke="#333" stroke-width=".6"/></svg>
<svg style="left:357px;top:77px" width="3" height="3" viewBox="0 0 3 3"><rect width="3" height="3" fill="#2a4fb0"/></svg>
<div id="t59" class="t " style="left:364.5px;top:70.5px;letter-spacing:-0.097px;color:#0d1424">Add Existing...</div>
<svg style="left:418.7px;top:71.2px" width="7" height="8" viewBox="0 0 8 9.5"><path d="M1.2 3L1.8 9H6.2L6.8 3Z" fill="#dcdcdc" stroke="#6e6e6e" stroke-width=".8"/><path d="M.3 2.5H7.7M2.8 2.3V1H5.2V2.3" fill="none" stroke="#6e6e6e" stroke-width=".8"/></svg>
<div id="t60" class="t " style="left:430px;top:70.5px;letter-spacing:-0.198px;color:#0d1424">Delete</div>
<svg style="left:456px;top:70px" width="6" height="6" viewBox="0 0 6 6"><path d="M.5 5.5V.5H5.5M3 .5V3.5" fill="none" stroke="#333" stroke-width=".7"/></svg>
<svg style="left:458.3px;top:71.8px" width="7" height="8" viewBox="0 0 8 9.5"><path d="M1.2 3L1.8 9H6.2L6.8 3Z" fill="#dcdcdc" stroke="#555" stroke-width=".8"/><path d="M.3 2.5H7.7M2.8 2.3V1H5.2V2.3" fill="none" stroke="#555" stroke-width=".8"/></svg>
<div id="t61" class="t " style="left:468.5px;top:70.5px;letter-spacing:-0.258px;color:#0d1424">Remove From Table</div>
<div class="grip" style="left:539.7px;top:70.2px"></div>
<svg style="left:546px;top:71px" width="11" height="9" viewBox="0 0 11 9"><path d="M.5 1.5H5.5M.5 4H5.5M.5 6.5H5.5" stroke="#c3c8d2" stroke-width="1.3"/><path d="M6 2.5H8V.8L10.5 3.2L8 5.6V4H6Z" fill="#c9ced8"/></svg>
<svg style="left:561.3px;top:74.6px" width="3.2" height="2" viewBox="0 0 3.2 2"><path d="M0 0H3.2L1.6 2Z" fill="#a9b6cc"/></svg>
<svg style="left:570px;top:70.5px" width="8" height="9" viewBox="0 0 8 9"><path d="M4 .8L7.4 4.3H5.8V8H2.2V4.3H.6Z" fill="#fff" stroke="#333" stroke-width=".8" stroke-linejoin="round"/></svg>
<svg style="left:585px;top:70.5px" width="8" height="9" viewBox="0 0 8 9"><path d="M4 8.2L7.4 4.7H5.8V1H2.2V4.7H.6Z" fill="#fff" stroke="#555" stroke-width=".8" stroke-linejoin="round"/></svg>
<div class="a" style="left:597.5px;top:68px;width:63.5px;height:14.6px;background:linear-gradient(#fcab56,#f99c40);border:.8px solid #e8903c;border-radius:1px"></div>
<svg style="left:599.5px;top:70px" width="10" height="10" viewBox="0 0 10 10"><rect x="3.5" y=".5" width="2.3" height="3.2" fill="#30349c"/><path d="M4.65 3.7V6.2M1 9.6V6.2H8.3V9.6M4.65 6.2V9.6" fill="none" stroke="#6a4812" stroke-width=".9"/></svg>
<div id="t62" class="t " style="left:612.5px;top:70.5px;letter-spacing:-0.413px;color:#2e1200;-webkit-text-stroke:.2px #2e1200">Show Columns</div>
<svg style="left:634px;top:68.5px" width="8" height="13" viewBox="0 0 8 13"><path d="M.6.6V10.2L2.9 8L4.6 12L6.2 11.3L4.5 7.4H7.6Z" fill="#fff" stroke="#000" stroke-width=".8" stroke-linejoin="round"/></svg>
<div class="grip" style="left:666.7px;top:70.2px"></div>
<svg style="left:672.5px;top:70.5px" width="9" height="10" viewBox="0 0 9 10"><path d="M.5.5H6L8.5 3V9.5H.5Z" fill="#f2f2f2" stroke="#444" stroke-width=".9"/><path d="M2.5 3.5H5V5.5H6.5" fill="none" stroke="#444" stroke-width=".7"/></svg>
<div id="t63" class="t " style="left:685px;top:70.5px;letter-spacing:-0.031px;color:#0d1424">Export</div>
<svg style="left:712px;top:70.5px" width="9.5" height="9.5" viewBox="0 0 9.5 9.5"><rect x="4" y=".8" width="5" height="8" fill="#fff" stroke="#1d6b3a" stroke-width=".7"/><path d="M4 3.3H9M4 6H9M6.8 .8V8.8" stroke="#1d6b3a" stroke-width=".5"/><path d="M.4 1.3L5.4.3V9.3L.4 8.3Z" fill="#1f7a43"/><path d="M1.7 3.2L3.9 6.6M3.9 3.2L1.7 6.6" stroke="#fff" stroke-width=".8"/></svg>
<svg style="left:726.9px;top:74.7px" width="3.2" height="2" viewBox="0 0 3.2 2"><path d="M0 0H3.2L1.6 2Z" fill="#222"/></svg>
<div class="grip" style="left:737.7px;top:70.2px"></div>
<svg style="left:744px;top:70.5px" width="9" height="10" viewBox="0 0 9 10"><path d="M1.2 4.3A3.4 3.4 0 0 1 7 2.6" fill="none" stroke="#2446c4" stroke-width="1.4"/><path d="M5.2 3.4L8.2 3.6L7.9 .6Z" fill="#2446c4"/><path d="M7.8 5.7A3.4 3.4 0 0 1 2 7.4" fill="none" stroke="#2446c4" stroke-width="1.4"/><path d="M3.8 6.6L.8 6.4L1.1 9.4Z" fill="#2446c4"/></svg>
<div class="a" style="left:758px;top:69px;width:0.8px;height:14px;background:#9fb4d4"></div>
<svg style="left:763px;top:70.5px" width="9" height="9.5" viewBox="0 0 9 9.5"><g opacity="1"><circle cx="3.6" cy="3.6" r="3" fill="#fff" stroke="#333" stroke-width=".8"/><path d="M5.8 5.8L8.6 9" stroke="#333" stroke-width="1.3"/><rect x="2.2" y="2.2" width="2.8" height="2.8" fill="none" stroke="#333" stroke-width=".6"/></g></svg>
<svg style="left:778px;top:70.5px" width="9" height="9.5" viewBox="0 0 9 9.5"><g opacity="0.55"><circle cx="3.6" cy="3.6" r="3" fill="#fff" stroke="#9aa" stroke-width=".8"/><path d="M5.8 5.8L8.6 9" stroke="#9aa" stroke-width="1.3"/><path d="M2.3 3.6H4.9M3.6 2.3V4.9" stroke="#9aa" stroke-width=".6"/></g></svg>
<svg style="left:793px;top:70.5px" width="9" height="9.5" viewBox="0 0 9 9.5"><g opacity="1"><circle cx="3.6" cy="3.6" r="3" fill="#fff" stroke="#333" stroke-width=".8"/><path d="M5.8 5.8L8.6 9" stroke="#333" stroke-width="1.3"/><path d="M2 3.6H5.2M3.6 2V5.2" stroke="#333" stroke-width=".8"/></g></svg>
<svg style="left:808px;top:70.5px" width="9" height="9.5" viewBox="0 0 9 9.5"><g opacity="1"><circle cx="3.6" cy="3.6" r="3" fill="#fff" stroke="#333" stroke-width=".8"/><path d="M5.8 5.8L8.6 9" stroke="#333" stroke-width="1.3"/><path d="M2 3.6H5.2" stroke="#333" stroke-width=".8"/></g></svg>
<div class="fld" style="left:821.5px;top:68.5px;width:34px;height:14.5px;border-color:#c8d0dc"></div>
<div id="t64" class="t " style="left:824.5px;top:70.7px;letter-spacing:-0.422px;color:#111">100%</div>
<svg style="left:846px;top:74px" width="6" height="3.5" viewBox="0 0 6 3.5"><path d="M.3.3L3 3L5.7.3" fill="none" stroke="#555" stroke-width=".8"/></svg>
<div class="grip" style="left:861.7px;top:70.2px"></div>
<svg style="left:867.5px;top:70.5px" width="9.5" height="9.5" viewBox="0 0 9.5 9.5"><path d="M.5.8H4.5L6 2.3V8.5H.5Z" fill="#fff" stroke="#444" stroke-width=".8"/><path d="M3.5 3L9 6L6.5 6.7L7.6 9L6.6 9.4L5.6 7.2L3.8 8.6Z" fill="#e8e8ee" stroke="#444" stroke-width=".6"/></svg>
<div class="grip" style="left:885.7px;top:70.2px"></div>
<svg style="left:891px;top:70.5px" width="9.5" height="9.5" viewBox="0 0 9 9"><path d="M8.94 3.78 L8.94 5.22 L7.81 5.28 L7.39 6.28 L8.15 7.13 L7.13 8.15 L6.28 7.39 L5.28 7.81 L5.22 8.94 L3.78 8.94 L3.72 7.81 L2.72 7.39 L1.87 8.15 L0.85 7.13 L1.61 6.28 L1.19 5.28 L0.06 5.22 L0.06 3.78 L1.19 3.72 L1.61 2.72 L0.85 1.87 L1.87 0.85 L2.72 1.61 L3.72 1.19 L3.78 0.06 L5.22 0.06 L5.28 1.19 L6.28 1.61 L7.13 0.85 L8.15 1.87 L7.39 2.72 L7.81 3.72Z" fill="#111"/><circle cx="4.5" cy="4.5" r="1.7" fill="#eee"/></svg>
<svg style="left:906.2px;top:74.7px" width="3.2" height="2" viewBox="0 0 3.2 2"><path d="M0 0H3.2L1.6 2Z" fill="#222"/></svg>
<div class="grip" style="left:917.7px;top:70.2px"></div>
<svg style="left:924px;top:73px" width="7.5" height="4.5" viewBox="0 0 7.5 4.5"><path d="M0 4.5L3.75 0L7.5 4.5Z" fill="#4a5568"/></svg>
<div class="grip" style="left:941.7px;top:70.2px"></div>
<div class="a" style="left:946.3px;top:69px;width:0.8px;height:14px;background:#a2b4d0"></div>
<svg style="left:952px;top:70.5px" width="6.5" height="9" viewBox="0 0 6.5 9"><path d="M.5.5L6 4.5L.5 8.5Z" fill="#cdd9ec" stroke="#9aa9c2" stroke-width=".7"/></svg>
<div class="grip" style="left:275.1px;top:87.7px"></div>
<svg style="left:281.5px;top:88.5px" width="9" height="9.5" viewBox="0 0 9 9.5"><circle cx="3.8" cy="3.8" r="3.1" fill="#fff" stroke="#222" stroke-width="1"/><path d="M6 6.2L8.3 8.8" stroke="#222" stroke-width="1.2"/></svg>
<div class="grip" style="left:299.1px;top:87.7px"></div>
<svg style="left:305px;top:88.5px" width="10.5" height="9.5" viewBox="0 0 10.5 9.5"><rect x=".5" y=".5" width="9.5" height="8.5" rx="1" fill="#fff" stroke="#333" stroke-width=".9"/><path d="M4 2.7H8.5M4 4.8H8.5M4 6.9H8.5" stroke="#333" stroke-width=".8"/><rect x="1.8" y="2.1" width="1.3" height="1.2" fill="#d33"/><rect x="1.8" y="4.2" width="1.3" height="1.2" fill="#e8a020"/><rect x="1.8" y="6.3" width="1.3" height="1.2" fill="#3a9a3a"/></svg>
<svg style="left:320.2px;top:92.3px" width="3.2" height="2" viewBox="0 0 3.2 2"><path d="M0 0H3.2L1.6 2Z" fill="#222"/></svg>
<div class="a" style="left:238px;top:101.5px;width:1037.6px;height:598.5px;background:#eeeeee"></div>
<div class="a" style="left:237.6px;top:101.5px;width:1038.3px;height:1px;background:#f6f6f6"></div>
<div id="t65" class="t " style="left:244px;top:102px;letter-spacing:-0.146px;color:#222">Criteria</div>
<div class="a" style="left:270px;top:107px;width:1000px;height:0.7px;background:#e2e2e2"></div>
<div id="t66" class="t " style="left:248.5px;top:115px;letter-spacing:-0.178px;color:#222">Element Type:</div>
<div class="fld" style="left:298px;top:112.7px;width:134px;height:14px"></div>
<div id="t67" class="t " style="left:301.5px;top:115px;letter-spacing:-0.028px;color:#222">Stereotype</div>
<div class="btn" style="left:436px;top:114.4px;width:28.8px;height:11px"></div>
<div id="t68" class="t " style="left:446.5px;top:115.5px;letter-spacing:0.109px;color:#555;font-size:8px">...</div>
<div id="t69" class="t " style="left:472px;top:115px;letter-spacing:-0.159px;color:#222">Scope (optional):</div>
<div class="fld" style="left:530px;top:112.7px;width:149.5px;height:14px"></div>
<div id="t70" class="t " style="left:533.5px;top:115px;letter-spacing:-0.048px;color:#222">Stereotypes</div>
<div id="t71" class="t " style="left:666.5px;top:115px;color:#bbb;font-size:7px">{}</div>
<svg style="left:671.5px;top:118px" width="4" height="4" viewBox="0 0 4 4"><path d="M.5.5L3.5 3.5M3.5.5L.5 3.5" stroke="#c4c4c4" stroke-width=".7"/></svg>
<div class="btn" style="left:683px;top:114.4px;width:28.8px;height:11px"></div>
<div id="t72" class="t " style="left:693.5px;top:115.5px;letter-spacing:0.109px;color:#555;font-size:8px">...</div>
<div id="t73" class="t " style="left:719px;top:115px;letter-spacing:-0.107px;color:#222">Filter:</div>
<div class="fld" style="left:741px;top:112.7px;width:136.5px;height:14px"></div>
<svg style="left:744.2px;top:116px" width="8.4" height="7.6" viewBox="0 0 8.4 7.6"><path d="M.5.5H7.9L5 3.8V7.2L3.4 6.3V3.8Z" fill="#fff" stroke="#222" stroke-width=".8" stroke-linejoin="round"/></svg>
<svg style="left:752.8px;top:118.8px" width="2.8" height="1.8" viewBox="0 0 2.8 1.8"><path d="M0 0H2.8L1.4 1.8Z" fill="#222"/></svg>
<div class="a" style="left:237.6px;top:132px;width:1038px;height:0.9px;background:#8e8e8e"></div>
<div class="a" style="left:238.5px;top:146.3px;width:711.8px;height:524.0999999999999px;background:#fff"></div>
<div class="a" style="left:238.5px;top:132.5px;width:711.8px;height:13.800000000000011px;background:linear-gradient(#f7f7f7,#ececec)"></div>
<div class="a" style="left:418.5px;top:132.5px;width:432.0px;height:13.800000000000011px;background:linear-gradient(#e4e4e4,#d9d9d9)"></div>
<div class="a" style="left:238.5px;top:145.20000000000002px;width:711.8px;height:1.3px;background:#8a8a8a"></div>
<div class="a" style="left:261.0px;top:132.5px;width:1px;height:13.800000000000011px;background:#7a7a7a"></div>
<div class="a" style="left:418.0px;top:132.5px;width:1px;height:13.800000000000011px;background:#7a7a7a"></div>
<div class="a" style="left:850.0px;top:132.5px;width:1px;height:13.800000000000011px;background:#7a7a7a"></div>
<div class="a" style="left:949.9px;top:132.5px;width:0.8px;height:13.800000000000011px;background:#9a9a9a"></div>
<div id="t74" class="t " style="left:247.5px;top:134.8px;color:#222">#</div>
<svg style="left:328px;top:137px" width="5.5" height="4.5" viewBox="0 0 5.5 4.5"><path d="M.4 4.1L2.75.4L5.1 4.1Z" fill="#f4f4f4" stroke="#9a9a9a" stroke-width=".6"/></svg>
<div id="t75" class="t " style="left:336.5px;top:134.8px;letter-spacing:-0.504px;color:#222">Name</div>
<div id="t76" class="t " style="left:610px;top:134.8px;letter-spacing:-0.189px;color:#222">Documentation</div>
<div id="t77" class="t " style="left:885px;top:134.8px;letter-spacing:-0.307px;color:#222">Metaclass</div>
<div class="a" style="left:238.5px;top:177.233px;width:711.8px;height:0.9px;background:#c9c9c9"></div>
<div id="t78" class="t " style="left:248.1px;top:156.6px;letter-spacing:-0.172px;color:#222">1</div>
<svg style="left:277.2px;top:159.9665px" width="7.8" height="3.8" viewBox="0 0 7.8 3.8"><path d="M2.8 .3L.5 1.9L2.8 3.5M5 .3L7.3 1.9L5 3.5" fill="none" stroke="#7c7c7c" stroke-width=".75"/></svg>
<div id="t79" class="t " style="left:289px;top:156.6px;letter-spacing:-0.128px;color:#111;text-decoration:underline">capability</div>
<div id="t80" class="t " style="left:419.7px;top:146.6px;letter-spacing:-0.113px;color:#1a1a1a">Stereotype applied to use cases to indicate they are capabilities.</div>
<svg style="left:852.6px;top:148.60000000000002px" width="9.5" height="9.5" viewBox="0 0 9.5 9.5"><rect x=".5" y=".5" width="8.5" height="8.5" fill="#fdf2de" stroke="#85705a" stroke-width=".8"/><rect x=".9" y="6.3" width="7.7" height="2.3" fill="#d6c09c"/><path d="M.9 5.9H8.6" stroke="#8a7458" stroke-width=".5"/><path d="M4.6 2V4.8M4.6 3.4H7.6M7.6 2V4.8" fill="none" stroke="#4a3a2a" stroke-width=".8"/></svg>
<div id="t81" class="t " style="left:865px;top:148.6px;letter-spacing:-0.480px;color:#222">UseCase</div>
<div class="a" style="left:238.5px;top:208.566px;width:711.8px;height:0.9px;background:#c9c9c9"></div>
<div id="t82" class="t " style="left:248.1px;top:187.6px;letter-spacing:-0.172px;color:#222">2</div>
<svg style="left:277.2px;top:191.29950000000002px" width="7.8" height="3.8" viewBox="0 0 7.8 3.8"><path d="M2.8 .3L.5 1.9L2.8 3.5M5 .3L7.3 1.9L5 3.5" fill="none" stroke="#7c7c7c" stroke-width=".75"/></svg>
<div id="t83" class="t " style="left:289px;top:188.6px;letter-spacing:-0.128px;color:#111">conceptual</div>
<div id="t84" class="t " style="left:419.7px;top:178.6px;letter-spacing:-0.091px;color:#1a1a1a">Stereotype applied to elements of the conceptual architecture.</div>
<svg style="left:852.6px;top:179.93300000000002px" width="9.5" height="9.5" viewBox="0 0 9.5 9.5"><rect x=".5" y=".5" width="8.5" height="8.5" fill="#fdf2de" stroke="#85705a" stroke-width=".8"/><rect x=".9" y="6.3" width="7.7" height="2.3" fill="#d6c09c"/><path d="M.9 5.9H8.6" stroke="#8a7458" stroke-width=".5"/><path d="M4.6 2V4.8M4.6 3.4H7.6M7.6 2V4.8" fill="none" stroke="#4a3a2a" stroke-width=".8"/></svg>
<div id="t85" class="t " style="left:865px;top:179.6px;letter-spacing:-0.309px;color:#222;font-style:italic">NamedElement</div>
<div class="a" style="left:238.5px;top:239.899px;width:711.8px;height:0.9px;background:#c9c9c9"></div>
<div id="t86" class="t " style="left:248.1px;top:219.6px;letter-spacing:-0.172px;color:#222">3</div>
<svg style="left:277.2px;top:222.6325px" width="7.8" height="3.8" viewBox="0 0 7.8 3.8"><path d="M2.8 .3L.5 1.9L2.8 3.5M5 .3L7.3 1.9L5 3.5" fill="none" stroke="#7c7c7c" stroke-width=".75"/></svg>
<div id="t87" class="t " style="left:289px;top:219.6px;letter-spacing:0.116px;color:#111">context</div>
<div id="t88" class="t " style="left:419.7px;top:209.6px;letter-spacing:-0.081px;color:#1a1a1a">Stereotype applied to context elements.</div>
<svg style="left:852.6px;top:211.26600000000002px" width="9.5" height="9.5" viewBox="0 0 9.5 9.5"><rect x=".5" y=".5" width="8.5" height="8.5" fill="#fdf2de" stroke="#85705a" stroke-width=".8"/><rect x=".9" y="6.3" width="7.7" height="2.3" fill="#d6c09c"/><path d="M.9 5.9H8.6" stroke="#8a7458" stroke-width=".5"/><path d="M4.6 2V4.8M4.6 3.4H7.6M7.6 2V4.8" fill="none" stroke="#4a3a2a" stroke-width=".8"/></svg>
<div id="t89" class="t " style="left:865px;top:211.6px;letter-spacing:-0.309px;color:#222;font-style:italic">NamedElement</div>
<div class="a" style="left:238.5px;top:271.232px;width:711.8px;height:0.9px;background:#c9c9c9"></div>
<div id="t90" class="t " style="left:248.1px;top:250.6px;letter-spacing:-0.172px;color:#222">4</div>
<svg style="left:277.2px;top:253.96550000000002px" width="7.8" height="3.8" viewBox="0 0 7.8 3.8"><path d="M2.8 .3L.5 1.9L2.8 3.5M5 .3L7.3 1.9L5 3.5" fill="none" stroke="#7c7c7c" stroke-width=".75"/></svg>
<div id="t91" class="t " style="left:289px;top:250.6px;letter-spacing:-0.123px;color:#111">exception</div>
<div id="t92" class="t " style="left:419.7px;top:240.6px;letter-spacing:-0.106px;color:#1a1a1a">Stereotype applied to extend relationships associated with "rainy day" scenarios.</div>
<svg style="left:852.6px;top:242.59900000000002px" width="9.5" height="9.5" viewBox="0 0 9.5 9.5"><rect x=".5" y=".5" width="8.5" height="8.5" fill="#fdf2de" stroke="#85705a" stroke-width=".8"/><rect x=".9" y="6.3" width="7.7" height="2.3" fill="#d6c09c"/><path d="M.9 5.9H8.6" stroke="#8a7458" stroke-width=".5"/><path d="M4.6 2V4.8M4.6 3.4H7.6M7.6 2V4.8" fill="none" stroke="#4a3a2a" stroke-width=".8"/></svg>
<div id="t93" class="t " style="left:865px;top:242.6px;letter-spacing:-0.143px;color:#222">Extend</div>
<div class="a" style="left:238.5px;top:302.56500000000005px;width:711.8px;height:0.9px;background:#c9c9c9"></div>
<div id="t94" class="t " style="left:248.1px;top:281.6px;letter-spacing:-0.172px;color:#222">5</div>
<svg style="left:277.2px;top:285.2985px" width="7.8" height="3.8" viewBox="0 0 7.8 3.8"><path d="M2.8 .3L.5 1.9L2.8 3.5M5 .3L7.3 1.9L5 3.5" fill="none" stroke="#7c7c7c" stroke-width=".75"/></svg>
<div id="t95" class="t " style="left:289px;top:282.6px;letter-spacing:-0.047px;color:#111">fons</div>
<div id="t96" class="t " style="left:419.7px;top:272.6px;letter-spacing:-0.122px;color:#1a1a1a">Stereotype applied to reference elements (such as source documents, mission statements, needs statements).</div>
<svg style="left:852.6px;top:273.932px" width="9.5" height="9.5" viewBox="0 0 9.5 9.5"><rect x=".5" y=".5" width="8.5" height="8.5" fill="#fdf2de" stroke="#85705a" stroke-width=".8"/><rect x=".9" y="6.3" width="7.7" height="2.3" fill="#d6c09c"/><path d="M.9 5.9H8.6" stroke="#8a7458" stroke-width=".5"/><path d="M4.6 2V4.8M4.6 3.4H7.6M7.6 2V4.8" fill="none" stroke="#4a3a2a" stroke-width=".8"/></svg>
<div id="t97" class="t " style="left:865px;top:273.6px;letter-spacing:-0.413px;color:#222">Class</div>
<div class="a" style="left:238.5px;top:333.898px;width:711.8px;height:0.9px;background:#c9c9c9"></div>
<div id="t98" class="t " style="left:248.1px;top:313.6px;letter-spacing:-0.172px;color:#222">6</div>
<svg style="left:277.2px;top:316.6315px" width="7.8" height="3.8" viewBox="0 0 7.8 3.8"><path d="M2.8 .3L.5 1.9L2.8 3.5M5 .3L7.3 1.9L5 3.5" fill="none" stroke="#7c7c7c" stroke-width=".75"/></svg>
<div id="t99" class="t " style="left:289px;top:313.6px;letter-spacing:-0.111px;color:#111">functional</div>
<div id="t100" class="t " style="left:419.7px;top:303.6px;letter-spacing:-0.080px;color:#1a1a1a">Stereotype applied to blocks of the functional architecture.&nbsp; These blocks own the operations that define the system functions.</div>
<svg style="left:852.6px;top:305.26500000000004px" width="9.5" height="9.5" viewBox="0 0 9.5 9.5"><rect x=".5" y=".5" width="8.5" height="8.5" fill="#fdf2de" stroke="#85705a" stroke-width=".8"/><rect x=".9" y="6.3" width="7.7" height="2.3" fill="#d6c09c"/><path d="M.9 5.9H8.6" stroke="#8a7458" stroke-width=".5"/><path d="M4.6 2V4.8M4.6 3.4H7.6M7.6 2V4.8" fill="none" stroke="#4a3a2a" stroke-width=".8"/></svg>
<div id="t101" class="t " style="left:865px;top:305.6px;letter-spacing:-0.309px;color:#222;font-style:italic">NamedElement</div>
<div class="a" style="left:238.5px;top:365.231px;width:711.8px;height:0.9px;background:#c9c9c9"></div>
<div id="t102" class="t " style="left:248.1px;top:344.6px;letter-spacing:-0.172px;color:#222">7</div>
<svg style="left:277.2px;top:347.9645px" width="7.8" height="3.8" viewBox="0 0 7.8 3.8"><path d="M2.8 .3L.5 1.9L2.8 3.5M5 .3L7.3 1.9L5 3.5" fill="none" stroke="#7c7c7c" stroke-width=".75"/></svg>
<div id="t103" class="t " style="left:289px;top:344.6px;letter-spacing:-0.297px;color:#111">goal</div>
<div id="t104" class="t " style="left:419.7px;top:334.6px;letter-spacing:-0.121px;color:#1a1a1a">Stereotype applied to goals of the MEPAG report.</div>
<svg style="left:852.6px;top:336.598px" width="9.5" height="9.5" viewBox="0 0 9.5 9.5"><rect x=".5" y=".5" width="8.5" height="8.5" fill="#fdf2de" stroke="#85705a" stroke-width=".8"/><rect x=".9" y="6.3" width="7.7" height="2.3" fill="#d6c09c"/><path d="M.9 5.9H8.6" stroke="#8a7458" stroke-width=".5"/><path d="M4.6 2V4.8M4.6 3.4H7.6M7.6 2V4.8" fill="none" stroke="#4a3a2a" stroke-width=".8"/></svg>
<div id="t105" class="t " style="left:865px;top:336.6px;letter-spacing:-0.480px;color:#222">UseCase</div>
<div class="a" style="left:238.5px;top:396.56399999999996px;width:711.8px;height:0.9px;background:#c9c9c9"></div>
<div id="t106" class="t " style="left:248.1px;top:375.6px;letter-spacing:-0.172px;color:#222">8</div>
<svg style="left:277.2px;top:379.29749999999996px" width="7.8" height="3.8" viewBox="0 0 7.8 3.8"><path d="M2.8 .3L.5 1.9L2.8 3.5M5 .3L7.3 1.9L5 3.5" fill="none" stroke="#7c7c7c" stroke-width=".75"/></svg>
<div id="t107" class="t " style="left:289px;top:376.6px;letter-spacing:-0.156px;color:#111">hazard</div>
<div id="t108" class="t " style="left:419.7px;top:366.6px;letter-spacing:-0.090px;color:#1a1a1a">This stereotype is applied to hazard that represent undesired safety-related outcomes.</div>
<svg style="left:852.6px;top:367.931px" width="9.5" height="9.5" viewBox="0 0 9.5 9.5"><rect x=".5" y=".5" width="8.5" height="8.5" fill="#fdf2de" stroke="#85705a" stroke-width=".8"/><rect x=".9" y="6.3" width="7.7" height="2.3" fill="#d6c09c"/><path d="M.9 5.9H8.6" stroke="#8a7458" stroke-width=".5"/><path d="M4.6 2V4.8M4.6 3.4H7.6M7.6 2V4.8" fill="none" stroke="#4a3a2a" stroke-width=".8"/></svg>
<div id="t109" class="t " style="left:865px;top:367.6px;letter-spacing:-0.309px;color:#222;font-style:italic">NamedElement</div>
<div class="a" style="left:238.5px;top:427.89700000000005px;width:711.8px;height:0.9px;background:#c9c9c9"></div>
<div id="t110" class="t " style="left:248.1px;top:407.6px;letter-spacing:-0.172px;color:#222">9</div>
<svg style="left:276px;top:407.6305px" width="10" height="10" viewBox="0 0 10 10"><circle cx="5" cy="5" r="4.9" fill="#000"/><rect x="2.2" y="4.1" width="5.6" height="1.8" fill="#fff"/></svg>
<div id="t111" class="t " style="left:289px;top:407.6px;letter-spacing:-0.290px;color:#111">immutable</div>
<div id="t112" class="t " style="left:419.7px;top:397.6px;letter-spacing:-0.124px;color:#1a1a1a">This stereotype is applied to model elements that cannot be modified.&nbsp; The documentation should be used to indicate the rationale.</div>
<svg style="left:852.6px;top:399.264px" width="9.5" height="9.5" viewBox="0 0 9.5 9.5"><rect x=".5" y=".5" width="8.5" height="8.5" fill="#fdf2de" stroke="#85705a" stroke-width=".8"/><rect x=".9" y="6.3" width="7.7" height="2.3" fill="#d6c09c"/><path d="M.9 5.9H8.6" stroke="#8a7458" stroke-width=".5"/><path d="M4.6 2V4.8M4.6 3.4H7.6M7.6 2V4.8" fill="none" stroke="#4a3a2a" stroke-width=".8"/></svg>
<div id="t113" class="t " style="left:865px;top:399.6px;letter-spacing:-0.309px;color:#222;font-style:italic">NamedElement</div>
<div class="a" style="left:238.5px;top:459.23px;width:711.8px;height:0.9px;background:#c9c9c9"></div>
<div id="t114" class="t " style="left:246.0px;top:438.6px;letter-spacing:-0.072px;color:#222">10</div>
<svg style="left:277.2px;top:441.96349999999995px" width="7.8" height="3.8" viewBox="0 0 7.8 3.8"><path d="M2.8 .3L.5 1.9L2.8 3.5M5 .3L7.3 1.9L5 3.5" fill="none" stroke="#7c7c7c" stroke-width=".75"/></svg>
<div id="t115" class="t " style="left:289px;top:438.6px;letter-spacing:-0.155px;color:#111">inheritance</div>
<div id="t116" class="t " style="left:419.7px;top:428.6px;letter-spacing:-0.111px;color:#1a1a1a">Stereotype applied to elements used to inherit relationships.</div>
<svg style="left:852.6px;top:430.597px" width="9.5" height="9.5" viewBox="0 0 9.5 9.5"><rect x=".5" y=".5" width="8.5" height="8.5" fill="#fdf2de" stroke="#85705a" stroke-width=".8"/><rect x=".9" y="6.3" width="7.7" height="2.3" fill="#d6c09c"/><path d="M.9 5.9H8.6" stroke="#8a7458" stroke-width=".5"/><path d="M4.6 2V4.8M4.6 3.4H7.6M7.6 2V4.8" fill="none" stroke="#4a3a2a" stroke-width=".8"/></svg>
<div id="t117" class="t " style="left:865px;top:430.6px;letter-spacing:-0.309px;color:#222;font-style:italic">NamedElement</div>
<div class="a" style="left:238.5px;top:490.563px;width:711.8px;height:0.9px;background:#c9c9c9"></div>
<div id="t118" class="t " style="left:246.0px;top:469.6px;letter-spacing:0.202px;color:#222">11</div>
<svg style="left:277.2px;top:473.2965px" width="7.8" height="3.8" viewBox="0 0 7.8 3.8"><path d="M2.8 .3L.5 1.9L2.8 3.5M5 .3L7.3 1.9L5 3.5" fill="none" stroke="#7c7c7c" stroke-width=".75"/></svg>
<div id="t119" class="t " style="left:289px;top:470.6px;letter-spacing:-0.054px;color:#111">investigation</div>
<div id="t120" class="t " style="left:419.7px;top:460.6px;letter-spacing:-0.111px;color:#1a1a1a">Stereotype applied to investigations of the MEPAG report.</div>
<svg style="left:852.6px;top:461.93px" width="9.5" height="9.5" viewBox="0 0 9.5 9.5"><rect x=".5" y=".5" width="8.5" height="8.5" fill="#fdf2de" stroke="#85705a" stroke-width=".8"/><rect x=".9" y="6.3" width="7.7" height="2.3" fill="#d6c09c"/><path d="M.9 5.9H8.6" stroke="#8a7458" stroke-width=".5"/><path d="M4.6 2V4.8M4.6 3.4H7.6M7.6 2V4.8" fill="none" stroke="#4a3a2a" stroke-width=".8"/></svg>
<div id="t121" class="t " style="left:865px;top:461.6px;letter-spacing:-0.309px;color:#222;font-style:italic">NamedElement</div>
<div class="a" style="left:238.5px;top:521.8960000000001px;width:711.8px;height:0.9px;background:#c9c9c9"></div>
<div id="t122" class="t " style="left:246.0px;top:501.6px;letter-spacing:-0.072px;color:#222">12</div>
<svg style="left:277.2px;top:504.6295px" width="7.8" height="3.8" viewBox="0 0 7.8 3.8"><path d="M2.8 .3L.5 1.9L2.8 3.5M5 .3L7.3 1.9L5 3.5" fill="none" stroke="#7c7c7c" stroke-width=".75"/></svg>
<div id="t123" class="t " style="left:289px;top:501.6px;letter-spacing:-0.324px;color:#111">logical</div>
<div id="t124" class="t " style="left:419.7px;top:491.6px;letter-spacing:-0.096px;color:#1a1a1a">Stereotype applied to elements of the logical architecture.</div>
<svg style="left:852.6px;top:493.26300000000003px" width="9.5" height="9.5" viewBox="0 0 9.5 9.5"><rect x=".5" y=".5" width="8.5" height="8.5" fill="#fdf2de" stroke="#85705a" stroke-width=".8"/><rect x=".9" y="6.3" width="7.7" height="2.3" fill="#d6c09c"/><path d="M.9 5.9H8.6" stroke="#8a7458" stroke-width=".5"/><path d="M4.6 2V4.8M4.6 3.4H7.6M7.6 2V4.8" fill="none" stroke="#4a3a2a" stroke-width=".8"/></svg>
<div id="t125" class="t " style="left:865px;top:493.6px;letter-spacing:-0.309px;color:#222;font-style:italic">NamedElement</div>
<div class="a" style="left:238.5px;top:553.229px;width:711.8px;height:0.9px;background:#c9c9c9"></div>
<div id="t126" class="t " style="left:246.0px;top:532.6px;letter-spacing:-0.072px;color:#222">13</div>
<svg style="left:277.2px;top:535.9625000000001px" width="7.8" height="3.8" viewBox="0 0 7.8 3.8"><path d="M2.8 .3L.5 1.9L2.8 3.5M5 .3L7.3 1.9L5 3.5" fill="none" stroke="#7c7c7c" stroke-width=".75"/></svg>
<div id="t127" class="t " style="left:289px;top:532.6px;letter-spacing:-0.348px;color:#111">mission</div>
<div id="t128" class="t " style="left:419.7px;top:522.6px;letter-spacing:-0.162px;color:#1a1a1a">Stereotype applied to elements used to define a NeMO mission.</div>
<svg style="left:852.6px;top:524.596px" width="9.5" height="9.5" viewBox="0 0 9.5 9.5"><rect x=".5" y=".5" width="8.5" height="8.5" fill="#fdf2de" stroke="#85705a" stroke-width=".8"/><rect x=".9" y="6.3" width="7.7" height="2.3" fill="#d6c09c"/><path d="M.9 5.9H8.6" stroke="#8a7458" stroke-width=".5"/><path d="M4.6 2V4.8M4.6 3.4H7.6M7.6 2V4.8" fill="none" stroke="#4a3a2a" stroke-width=".8"/></svg>
<div id="t129" class="t " style="left:865px;top:524.6px;letter-spacing:-0.309px;color:#222;font-style:italic">NamedElement</div>
<div class="a" style="left:238.5px;top:584.5619999999999px;width:711.8px;height:0.9px;background:#c9c9c9"></div>
<div id="t130" class="t " style="left:246.0px;top:563.6px;letter-spacing:-0.072px;color:#222">14</div>
<svg style="left:277.2px;top:567.2955px" width="7.8" height="3.8" viewBox="0 0 7.8 3.8"><path d="M2.8 .3L.5 1.9L2.8 3.5M5 .3L7.3 1.9L5 3.5" fill="none" stroke="#7c7c7c" stroke-width=".75"/></svg>
<div id="t131" class="t " style="left:289px;top:564.6px;letter-spacing:-0.068px;color:#111">objective</div>
<div id="t132" class="t " style="left:419.7px;top:554.6px;letter-spacing:-0.099px;color:#1a1a1a">Stereotype applied to objectives of the MEPAG report.</div>
<svg style="left:852.6px;top:555.9289999999999px" width="9.5" height="9.5" viewBox="0 0 9.5 9.5"><rect x=".5" y=".5" width="8.5" height="8.5" fill="#fdf2de" stroke="#85705a" stroke-width=".8"/><rect x=".9" y="6.3" width="7.7" height="2.3" fill="#d6c09c"/><path d="M.9 5.9H8.6" stroke="#8a7458" stroke-width=".5"/><path d="M4.6 2V4.8M4.6 3.4H7.6M7.6 2V4.8" fill="none" stroke="#4a3a2a" stroke-width=".8"/></svg>
<div id="t133" class="t " style="left:865px;top:555.6px;letter-spacing:-0.480px;color:#222">UseCase</div>
<div class="a" style="left:238.5px;top:615.895px;width:711.8px;height:0.9px;background:#c9c9c9"></div>
<div class="a" style="left:238.5px;top:585.362px;width:22.5px;height:30.532999999999998px;background:#d9d9d9"></div>
<div class="a" style="left:418.9px;top:585.262px;width:431.2px;height:30.833px;background:#0078d7"></div>
<div id="t134" class="t " style="left:246.0px;top:595.6px;letter-spacing:-0.072px;color:#222">15</div>
<svg style="left:277.2px;top:598.6285px" width="7.8" height="3.8" viewBox="0 0 7.8 3.8"><path d="M2.8 .3L.5 1.9L2.8 3.5M5 .3L7.3 1.9L5 3.5" fill="none" stroke="#7c7c7c" stroke-width=".75"/></svg>
<div id="t135" class="t " style="left:289px;top:595.6px;letter-spacing:0.016px;color:#111">part</div>
<svg style="left:852.6px;top:587.262px" width="9.5" height="9.5" viewBox="0 0 9.5 9.5"><rect x=".5" y=".5" width="8.5" height="8.5" fill="#fdf2de" stroke="#85705a" stroke-width=".8"/><rect x=".9" y="6.3" width="7.7" height="2.3" fill="#d6c09c"/><path d="M.9 5.9H8.6" stroke="#8a7458" stroke-width=".5"/><path d="M4.6 2V4.8M4.6 3.4H7.6M7.6 2V4.8" fill="none" stroke="#4a3a2a" stroke-width=".8"/></svg>
<div id="t136" class="t " style="left:865px;top:587.6px;letter-spacing:0.018px;color:#222">Property</div>
<div class="a" style="left:238.5px;top:647.2280000000001px;width:711.8px;height:0.9px;background:#c9c9c9"></div>
<div id="t137" class="t " style="left:246.0px;top:626.6px;letter-spacing:-0.072px;color:#222">16</div>
<svg style="left:277.2px;top:629.9615000000001px" width="7.8" height="3.8" viewBox="0 0 7.8 3.8"><path d="M2.8 .3L.5 1.9L2.8 3.5M5 .3L7.3 1.9L5 3.5" fill="none" stroke="#7c7c7c" stroke-width=".75"/></svg>
<div id="t138" class="t " style="left:289px;top:626.6px;letter-spacing:-0.139px;color:#111">physical</div>
<div id="t139" class="t " style="left:419.7px;top:616.6px;letter-spacing:-0.091px;color:#1a1a1a">Stereotype applied to elements of the physical architecture.</div>
<svg style="left:852.6px;top:618.595px" width="9.5" height="9.5" viewBox="0 0 9.5 9.5"><rect x=".5" y=".5" width="8.5" height="8.5" fill="#fdf2de" stroke="#85705a" stroke-width=".8"/><rect x=".9" y="6.3" width="7.7" height="2.3" fill="#d6c09c"/><path d="M.9 5.9H8.6" stroke="#8a7458" stroke-width=".5"/><path d="M4.6 2V4.8M4.6 3.4H7.6M7.6 2V4.8" fill="none" stroke="#4a3a2a" stroke-width=".8"/></svg>
<div id="t140" class="t " style="left:865px;top:618.6px;letter-spacing:-0.309px;color:#222;font-style:italic">NamedElement</div>
<div id="t141" class="t " style="left:246.0px;top:657.6px;letter-spacing:-0.072px;color:#222">17</div>
<svg style="left:277.2px;top:661.2945px" width="7.8" height="3.8" viewBox="0 0 7.8 3.8"><path d="M2.8 .3L.5 1.9L2.8 3.5M5 .3L7.3 1.9L5 3.5" fill="none" stroke="#7c7c7c" stroke-width=".75"/></svg>
<div id="t142" class="t " style="left:289px;top:658.6px;letter-spacing:-0.073px;color:#111">pinout</div>
<div id="t143" class="t " style="left:419.7px;top:648.6px;letter-spacing:-0.086px;color:#1a1a1a">Stereotype applied to the pinout-level interface blocks.</div>
<svg style="left:852.6px;top:649.9279999999999px" width="9.5" height="9.5" viewBox="0 0 9.5 9.5"><rect x=".5" y=".5" width="8.5" height="8.5" fill="#fdf2de" stroke="#85705a" stroke-width=".8"/><rect x=".9" y="6.3" width="7.7" height="2.3" fill="#d6c09c"/><path d="M.9 5.9H8.6" stroke="#8a7458" stroke-width=".5"/><path d="M4.6 2V4.8M4.6 3.4H7.6M7.6 2V4.8" fill="none" stroke="#4a3a2a" stroke-width=".8"/></svg>
<div id="t144" class="t " style="left:865px;top:649.6px;letter-spacing:-0.413px;color:#222">Class</div>
<div class="a" style="left:261.1px;top:146.3px;width:0.9px;height:524.0999999999999px;background:#c2c2c2"></div>
<div class="a" style="left:418.1px;top:146.3px;width:0.9px;height:524.0999999999999px;background:#c2c2c2"></div>
<div class="a" style="left:850.1px;top:146.3px;width:0.9px;height:524.0999999999999px;background:#c2c2c2"></div>
<div class="a" style="left:949.9px;top:146.3px;width:0.9px;height:524.0999999999999px;background:#c2c2c2"></div>
<div class="a" style="left:237.9px;top:132.5px;width:0.8px;height:537.9px;background:#c8c8c8"></div>
<div class="a" style="left:237.6px;top:670.4px;width:1038px;height:0.8px;background:#a8a8a8"></div>
<div class="a" style="left:1264px;top:147px;width:10.5px;height:523px;background:#f4f4f4"></div>
<div class="a" style="left:1264px;top:157.5px;width:10.5px;height:380.5px;background:#cdcdcd"></div>
<svg style="left:1266.5px;top:151px" width="6" height="4" viewBox="0 0 6 4"><path d="M.5 3.5L3 .8L5.5 3.5" fill="none" stroke="#222" stroke-width="1.4"/></svg>
<svg style="left:1266.5px;top:662px" width="6" height="4" viewBox="0 0 6 4"><path d="M.5 .5L3 3.2L5.5 .5" fill="none" stroke="#222" stroke-width="1.4"/></svg>
<div class="a" style="left:237.6px;top:673.4px;width:1038.3px;height:1.1px;background:#9a9a9a"></div>
<div class="a" style="left:237.6px;top:674.6px;width:1038.3px;height:15.4px;background:#fff"></div>
<div class="a" style="left:237.6px;top:690px;width:1038.3px;height:0.8px;background:#9a9a9a"></div>
<div id="t145" class="t " style="left:1221px;top:676px;letter-spacing:-0.397px;color:#2a2f9a;text-decoration:underline">Show Description</div>
<div id="t146" class="t " style="left:237.8px;top:691px;letter-spacing:-0.085px;color:#111">Filter is not applied. <b>22</b> rows are displayed in the table.</div>
<div class="a" style="left:232px;top:702.4px;width:1048px;height:1.6px;background:#d4e5fc"></div>
<div class="a" style="left:0px;top:704.4px;width:1280px;height:14.4px;background:linear-gradient(#dbe9fb,#c9ddf8 40%,#b4d0f3 60%,#c3daf7)"></div>
<div class="a" style="left:0px;top:703.8px;width:1280px;height:0.8px;background:#9db8dd"></div>
<div class="a" style="left:0px;top:718.6px;width:1280px;height:1.4px;background:#000"></div>
<svg style="left:2.5px;top:706.5px" width="10" height="10" viewBox="0 0 10 10"><rect x=".8" y=".8" width="8" height="5.6" rx="1.5" fill="#fff" stroke="#334" stroke-width=".8"/><path d="M2.5 6.4L2 8.8L5 6.4" fill="#fff" stroke="#334" stroke-width=".7"/><path d="M4 8.6H9" stroke="#3a78c8" stroke-width="1"/></svg>
<div id="t147" class="t " style="left:16px;top:706.6px;letter-spacing:-0.169px;color:#111">Show or hide columns in the table</div>
<div class="a" style="left:1045px;top:704.5px;width:0.8px;height:13.5px;background:#dfeafa"></div>
<div class="a" style="left:1061px;top:704.5px;width:0.8px;height:13.5px;background:#dfeafa"></div>
<div class="a" style="left:1097px;top:704.5px;width:0.8px;height:13.5px;background:#dfeafa"></div>
<svg style="left:1048.5px;top:706.5px" width="10" height="10" viewBox="0 0 10 10"><rect x=".5" y=".5" width="6.5" height="5" rx="1" fill="#eee" stroke="#667" stroke-width=".7"/><path d="M1.5 3.5L5 5.5L1.5 7.5Z" fill="#99a"/><path d="M5.5 5L9 7.5L7.3 7.8L8 9.4L7.2 9.7L6.5 8.2L5.5 9Z" fill="#fff" stroke="#556" stroke-width=".5"/></svg>
<svg style="left:1075px;top:707px" width="9" height="9" viewBox="0 0 9 9"><circle cx="4.5" cy="4.5" r="2.2" fill="none" stroke="#9ab0d0" stroke-width=".9"/><path d="M4.5 0V1.6M4.5 7.4V9M0 4.5H1.6M7.4 4.5H9M1.3 1.3L2.4 2.4M6.6 6.6L7.7 7.7M7.7 1.3L6.6 2.4M1.3 7.7L2.4 6.6" stroke="#9ab0d0" stroke-width=".8"/></svg>
<div class="a" style="left:1099.5px;top:705.8px;width:43.5px;height:11.6px;background:#e8e8e8;border:.7px solid #c4ccd8"></div>
<div id="t148" class="t " style="left:1109.5px;top:706.8px;letter-spacing:-0.339px;color:#111">135463</div>
<div class="a" style="left:1145px;top:704.6px;width:93.5px;height:14px;background:#fff"></div>
<div class="a" style="left:1258.5px;top:704.6px;width:21.5px;height:14px;background:linear-gradient(#e4eefc,#d6e5fa)"></div>
<div class="a" style="left:1238.5px;top:704.6px;width:20px;height:14px;background:#c5dcfb"></div>
<div id="t149" class="t " style="left:1155.5px;top:706.8px;letter-spacing:-0.205px;color:#222">1386M of 1710M&nbsp; (max 7111M)</div>
<svg style="left:1265.5px;top:706.3px" width="8.5" height="10" viewBox="0 0 8 9.5"><path d="M1.2 3L1.8 9H6.2L6.8 3Z" fill="#d8d8d8" stroke="#333" stroke-width=".8"/><path d="M.3 2.5H7.7M2.8 2.3V1H5.2V2.3" fill="none" stroke="#333" stroke-width=".8"/></svg>
</div></body></html>
